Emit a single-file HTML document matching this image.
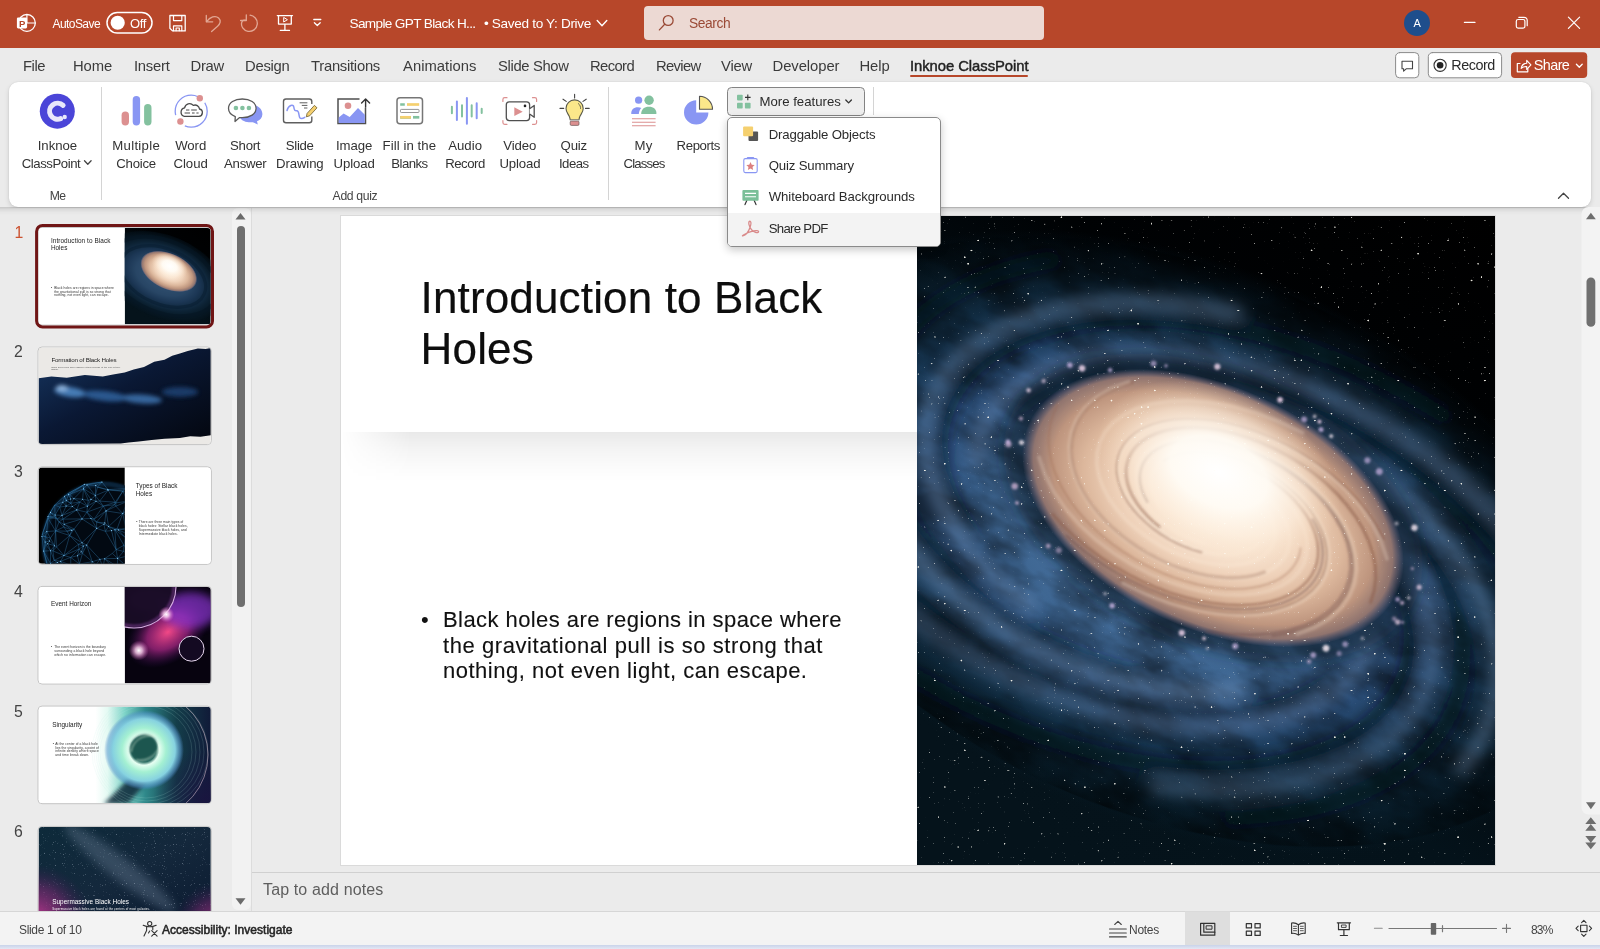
<!DOCTYPE html>
<html lang="en">
<head>
<meta charset="utf-8">
<title>Sample GPT Black Holes - PowerPoint</title>
<style>
*{box-sizing:border-box;margin:0;padding:0}
html,body{width:1600px;height:949px;overflow:hidden;background:#ebebeb;font-family:"Liberation Sans",sans-serif;color:#262626}
#app{position:relative;width:1600px;height:949px;overflow:hidden;will-change:transform}
.abs{position:absolute}
.f{position:absolute;white-space:nowrap;font-size:var(--s);line-height:calc(var(--s)*1.2);top:calc(var(--b) - var(--s)*0.9465)}
svg{position:absolute;overflow:visible}
svg svg{position:static;overflow:hidden}
/* title bar */
#titlebar{left:0;top:0;width:1600px;height:48.8px;background:#b7472a}
#titlebar .f{color:#fff}
#search{left:644px;top:5.8px;width:399.5px;height:33.8px;background:#ecd9d3;border-radius:4px}
/* tab row */
#tabs{left:0;top:48px;width:1600px;height:36px;background:#ebebeb}
#tabtext .f{--s:14.8px;--b:71.2px;color:#3b3b3b}
/* ribbon */
#ribbon{left:9px;top:82px;width:1582px;height:125px;background:#fff;border-radius:9px;box-shadow:0 2px 5px rgba(0,0,0,.13),0 0 1.5px rgba(0,0,0,.14)}
.lbl{--s:13.2px;color:#333}
.grp{--s:12.2px;color:#444}
.dd{--s:13.2px;color:#2b2b2b}
#dd{z-index:50}
#ddtext .f{z-index:51}
#ribicons{z-index:52}
.sep{position:absolute;width:1px;background:#d4d4d4}
/* left pane */
#left{left:0;top:208px;width:251px;height:703px;background:#ebebeb}
.num{--s:17px;color:#444}
.thumb{position:absolute;left:39px;width:172px;height:97px;border-radius:5px;overflow:hidden;background:#fff;box-shadow:0 0 0 1px #c9c9c9,0 1px 2px rgba(0,0,0,.25)}
/* main */
#main{left:252px;top:208px;width:1348px;height:664px;background:#ebebeb}
#slide{left:341px;top:216px;width:1154px;height:649px;background:#fff;box-shadow:0 0 0 1px #dadada}
#notes{left:252px;top:872px;width:1348px;height:39px;background:#ebebeb;border-top:1px solid #d0d0d0}
#status{left:0;top:910.5px;width:1600px;height:35px;background:#f3f3f3;border-top:1px solid #d6d6d6}
#statustext .f{--s:12px;--b:934px;color:#444}
#desk{left:0;top:945.3px;width:1600px;height:4px;background:linear-gradient(#c9d3ea,#e4e8f4)}
</style>
</head>
<body>
<div id="app">

<!-- ================= TITLE BAR ================= -->
<div id="titlebar" class="abs">
  <span class="f" style="top:16.80px;left:52.5px;--s:12px;--b:27.8px;letter-spacing:-0.568px;">AutoSave</span>
  <span class="f" style="top:15.80px;left:130px;--s:13px;--b:27.8px;letter-spacing:-0.370px;">Off</span>
  <span class="f" style="top:15.80px;left:349.5px;--s:13.6px;--b:27.8px;letter-spacing:-0.644px;">Sample GPT Black H...</span>
  <span class="f" style="top:15.80px;left:484px;--s:13.6px;--b:27.8px;letter-spacing:-0.333px;">• Saved to Y: Drive</span>
  <div id="search" class="abs"></div>
  <span class="f" style="top:15.90px;left:689px;--s:13.8px;--b:27.9px;letter-spacing:-0.403px;color:#9a4a36">Search</span>
  <div class="abs" style="left:1404px;top:10px;width:26px;height:26px;border-radius:50%;background:#1e4e8c"></div>
  <span class="f" style="top:17.00px;left:1413.5px;--s:11px;--b:27px;letter-spacing:0.156px;">A</span>
</div>

<!-- ================= TAB ROW ================= -->
<div id="tabs" class="abs"></div>
<div id="tabtext">
  <span class="f" style="top:58.20px;left:23px;letter-spacing:-0.461px;">File</span>
  <span class="f" style="top:58.20px;left:73px;letter-spacing:-0.121px;">Home</span>
  <span class="f" style="top:58.20px;left:134px;letter-spacing:-0.253px;">Insert</span>
  <span class="f" style="top:58.20px;left:190.5px;letter-spacing:-0.258px;">Draw</span>
  <span class="f" style="top:58.20px;left:245px;letter-spacing:-0.260px;">Design</span>
  <span class="f" style="top:58.20px;left:311px;letter-spacing:-0.257px;">Transitions</span>
  <span class="f" style="top:58.20px;left:403px;letter-spacing:0.030px;">Animations</span>
  <span class="f" style="top:58.20px;left:498px;letter-spacing:-0.353px;">Slide Show</span>
  <span class="f" style="top:58.20px;left:590px;letter-spacing:-0.617px;">Record</span>
  <span class="f" style="top:58.20px;left:656px;letter-spacing:-0.672px;">Review</span>
  <span class="f" style="top:58.20px;left:721px;letter-spacing:-0.203px;">View</span>
  <span class="f" style="top:58.20px;left:772.5px;letter-spacing:-0.050px;">Developer</span>
  <span class="f" style="top:58.20px;left:859.5px;letter-spacing:-0.109px;">Help</span>
  <span class="f" style="top:58.20px;left:910px;letter-spacing:-0.045px;-webkit-text-stroke:.45px #222;color:#222">Inknoe ClassPoint</span>
  <div class="abs" style="left:910px;top:75px;width:118px;height:2px;background:#b7472a;border-radius:1px"></div>
</div>

<!--CHROME-START--><svg id="tbicons" style="left:0;top:0;z-index:5" width="1600" height="84" viewBox="0 0 1600 84" fill="none" stroke-linecap="round" stroke-linejoin="round">
  <!-- PowerPoint logo -->
  <circle cx="26.9" cy="22.9" r="8.4" stroke="#fff" stroke-width="1.3"/>
  <path d="M26.9 14.6V23H35.2" stroke="#fff" stroke-width="1.2"/>
  <rect x="16.9" y="17.5" width="10.2" height="10.9" rx="1.3" fill="#fff"/>
  <!-- autosave toggle -->
  <rect x="107" y="12.5" width="45" height="20.5" rx="10.25" stroke="#fff" stroke-width="1.5"/>
  <circle cx="117.700" cy="22.750" r="7.1" fill="#fff"/>
  <!-- save -->
  <path d="M169.900 15.500h15.300v15.400h-12.700l-2.600-2.600z" stroke="#fff" stroke-width="1.300"/>
  <path d="M173.500 15.700v4.900h8.300v-4.900M173.500 30.700v-4.900h8.300v4.900M176.100 30.700v-2.700h3.200v2.700" stroke="#fff" stroke-width="1.200"/>
  <!-- undo / redo (disabled) -->
  <g stroke="#e2a794" stroke-width="1.300">
    <path d="M206.300 15.400v6.400h6.400"/><path d="M206.600 21.600c3.400-4.600 8.800-6.600 12-3.600 2.700 2.600 1.800 5.800-1 8.200l-6 5.400"/>
    <path d="M246.300 14.800v5.700h-5.700"/><path d="M246 20.300c-4.600-1.500-5.500 4.300-3.300 7.600 2.600 3.800 7.700 4.600 11.300 2 3.900-2.900 4.400-8.500 1.300-11.900-1.500-1.600-3.300-2.500-5.200-2.800"/>
  </g>
  <!-- present -->
  <path d="M277.300 15.600h15.200M278.500 15.800v8.300h12.800v-8.300M284.900 24.300v6M280.300 30.400h9.200" stroke="#fff" stroke-width="1.300"/>
  <path d="M283.700 17.800v4.200l3.400-2.100z" stroke="#fff" stroke-width="1"/>
  <!-- qat caret -->
  <path d="M313.800 19.500h7M314.400 22.700l2.900 2.800 2.900-2.800" stroke="#fff" stroke-width="1.300"/>
  <!-- saved chevron -->
  <path d="M597.200 20.600l4.800 5.100 4.800-5.100" stroke="#fff" stroke-width="1.400"/>
  <!-- search icon -->
  <circle cx="668.200" cy="20.500" r="4.900" stroke="#9a4a36" stroke-width="1.300"/><path d="M664.700 24.200l-5.300 5.700" stroke="#9a4a36" stroke-width="1.300"/>
  <!-- window controls -->
  <path d="M1464.400 22.400h10.600" stroke="#fff" stroke-width="1.200"/>
  <rect x="1516.300" y="19.500" width="8.600" height="8.600" rx="1.800" stroke="#fff" stroke-width="1.200"/>
  <path d="M1518.800 17.300h5.400a3 3 0 0 1 3 3v5.400" stroke="#fff" stroke-width="1.200"/>
  <path d="M1568.400 17.100l11.200 11.200M1579.600 17.100l-11.200 11.200" stroke="#fff" stroke-width="1.200"/>
  <!-- tab row right buttons -->
  <rect x="1395.600" y="52.600" width="23.200" height="25.200" rx="4" fill="#fff" stroke="#8a8a8a" stroke-width="1"/>
  <path d="M1402 61.200h10.500v7.600h-6.300l-2.600 2.400v-2.400h-1.600z" stroke="#444" stroke-width="1.100"/>
  <rect x="1428.300" y="52.600" width="73.300" height="25.200" rx="4" fill="#fff" stroke="#8a8a8a" stroke-width="1"/>
  <circle cx="1440.100" cy="65.300" r="6.100" stroke="#333" stroke-width="1.100"/><circle cx="1440.100" cy="65.300" r="3.300" fill="#222"/>
  <rect x="1511" y="52.300" width="76.200" height="25.800" rx="4" fill="#b7472a"/>
  <path d="M1520 63.500h-2.700v8.300h10.500v-3.200" stroke="#fff" stroke-width="1.200"/>
  <path d="M1521.200 68.400c.5-3.300 2.500-5 5.500-5.100v-2.900l4.200 4.500-4.200 4.500v-2.900c-2.300-.1-4 .5-5.500 1.900z" stroke="#fff" stroke-width="1.100"/>
  <path d="M1576.400 64.300l2.900 2.900 2.900-2.900" stroke="#fff" stroke-width="1.300"/>
</svg>
<span class="f" style="top:17.60px;left:19.100px;--s:9.500px;--b:26.600px;color:#b7472a;font-weight:bold;z-index:6">P</span>
<span class="f" style="top:57.30px;left:1451.300px;--s:14.4px;--b:70.3px;letter-spacing:-0.482px;color:#2b2b2b;z-index:6">Record</span>
<span class="f" style="top:57.30px;left:1533.800px;--s:14.4px;--b:70.3px;letter-spacing:-0.581px;color:#fff;z-index:6">Share</span>
<!--CHROME-END-->
<!-- ================= RIBBON ================= -->
<!--RIB-START--><div id="ribbon" class="abs"></div>
<div id="ribtext">
  <span class="f lbl" style="top:138.40px;left:37.7px;--b:150.4px;letter-spacing:-0.018px;">Inknoe</span>
  <span class="f lbl" style="top:155.50px;left:21.8px;--b:167.5px;letter-spacing:-0.455px;">ClassPoint</span>
  <span class="f lbl grp" style="top:188.60px;left:49.7px;--b:199.6px;letter-spacing:-0.569px;">Me</span>
  <span class="f lbl" style="top:138.40px;left:112.2px;--b:150.4px;letter-spacing:0.318px;">Multiple</span>
  <span class="f lbl" style="top:155.50px;left:116.3px;--b:167.5px;letter-spacing:-0.260px;">Choice</span>
  <span class="f lbl" style="top:138.40px;left:175.2px;--b:150.4px;letter-spacing:-0.070px;">Word</span>
  <span class="f lbl" style="top:155.50px;left:173.4px;--b:167.5px;letter-spacing:0.006px;">Cloud</span>
  <span class="f lbl" style="top:138.40px;left:230px;--b:150.4px;letter-spacing:-0.246px;">Short</span>
  <span class="f lbl" style="top:155.50px;left:224px;--b:167.5px;letter-spacing:-0.247px;">Answer</span>
  <span class="f lbl" style="top:138.40px;left:285.8px;--b:150.4px;letter-spacing:-0.306px;">Slide</span>
  <span class="f lbl" style="top:155.50px;left:276px;--b:167.5px;letter-spacing:-0.111px;">Drawing</span>
  <span class="f lbl" style="top:138.40px;left:336px;--b:150.4px;letter-spacing:-0.091px;">Image</span>
  <span class="f lbl" style="top:155.50px;left:333.6px;--b:167.5px;letter-spacing:-0.133px;">Upload</span>
  <span class="f lbl" style="top:138.40px;left:382.6px;--b:150.4px;letter-spacing:0.074px;">Fill in the</span>
  <span class="f lbl" style="top:155.50px;left:391.3px;--b:167.5px;letter-spacing:-0.532px;">Blanks</span>
  <span class="f lbl" style="top:138.40px;left:448.2px;--b:150.4px;letter-spacing:0.013px;">Audio</span>
  <span class="f lbl" style="top:155.50px;left:445.2px;--b:167.5px;letter-spacing:-0.469px;">Record</span>
  <span class="f lbl" style="top:138.40px;left:503.3px;--b:150.4px;letter-spacing:-0.100px;">Video</span>
  <span class="f lbl" style="top:155.50px;left:499.4px;--b:167.5px;letter-spacing:-0.133px;">Upload</span>
  <span class="f lbl" style="top:138.40px;left:560.6px;--b:150.4px;letter-spacing:-0.206px;">Quiz</span>
  <span class="f lbl" style="top:155.50px;left:559px;--b:167.5px;letter-spacing:-0.553px;">Ideas</span>
  <span class="f lbl" style="top:138.40px;left:634.5px;--b:150.4px;letter-spacing:0.353px;">My</span>
  <span class="f lbl" style="top:155.50px;left:623.6px;--b:167.5px;letter-spacing:-0.872px;">Classes</span>
  <span class="f lbl" style="top:138.40px;left:676.6px;--b:150.4px;letter-spacing:-0.398px;">Reports</span>
  <span class="f lbl grp" style="top:188.60px;left:332.6px;--b:199.6px;letter-spacing:-0.330px;">Add quiz</span>
  <div class="sep" style="left:101px;top:87px;height:113px"></div>
  <div class="sep" style="left:608px;top:87px;height:113px"></div>
  <div class="sep" style="left:872.5px;top:87px;height:28px"></div>
  <!-- More features button -->
  <div class="abs" style="left:727px;top:86.5px;width:137.5px;height:29px;background:#eeeeee;border:1.4px solid #838383;border-radius:4.5px"></div>
  <span class="f lbl" style="top:94.30px;left:759.4px;--b:106.3px;letter-spacing:0.017px;color:#2b2b2b">More features</span>
</div>
<!-- dropdown -->
<div id="dd" class="abs" style="left:727px;top:116.5px;width:214.3px;height:130.3px;background:#fff;border:1px solid #8a8a8a;border-radius:5px;box-shadow:0 3px 8px rgba(0,0,0,.22);overflow:hidden">
  <div class="abs" style="left:0;top:95.7px;width:214px;height:33px;background:#f3f3f3"></div>
</div>
<div id="ddtext">
  <span class="f dd" style="top:126.70px;left:768.7px;--b:138.7px;letter-spacing:-0.149px;">Draggable Objects</span>
  <span class="f dd" style="top:158.10px;left:768.7px;--b:170.1px;letter-spacing:-0.167px;">Quiz Summary</span>
  <span class="f dd" style="top:189.30px;left:768.7px;--b:201.3px;letter-spacing:-0.090px;">Whiteboard Backgrounds</span>
  <span class="f dd" style="top:220.90px;left:768.7px;--b:232.9px;letter-spacing:-0.704px;">Share PDF</span>
</div>
<svg id="ribicons" style="left:0;top:0" width="1600" height="260" viewBox="0 0 1600 260" fill="none">
  <!-- ClassPoint logo -->
  <circle cx="57.3" cy="111.2" r="17.5" fill="#4b45d8"/>
  <path d="M63.1 105.4 A8 8 0 1 0 60.6 118.6" stroke="#e9e7fb" stroke-width="5" stroke-linecap="round"/>
  <circle cx="64.7" cy="117" r="2.2" fill="#e9e7fb"/>
  <path d="M84.5 160.8l3.3 3.4 3.3-3.4" stroke="#444" stroke-width="1.3" stroke-linecap="round" stroke-linejoin="round"/>
  <!-- Multiple choice -->
  <g stroke-linecap="round" stroke-width="7.4">
    <path d="M125.3 115.2V121.8" stroke="#dc9090"/>
    <path d="M136.4 99.8V121.8" stroke="#8996f3"/>
    <path d="M147.8 107.7V121.8" stroke="#83c19f"/>
  </g>
  <!-- Word cloud -->
  <circle cx="191.2" cy="111.2" r="16" stroke="#8996f3" stroke-width="1.3" stroke-dasharray="36 9 41 14.5" stroke-dashoffset="-46"/>
  <circle cx="199.8" cy="98.3" r="3.2" fill="#dc9090"/>
  <circle cx="180.4" cy="121.5" r="3.2" fill="#dc9090"/>
  <path d="M184.3 116.3h14.6a3.7 3.7 0 0 0 .6-7.3 4.4 4.4 0 0 0-6.2-3.6 5 5 0 0 0-8.7 2.5 4.3 4.3 0 0 0-.3 8.4z" fill="#fff" stroke="#4a4a4a" stroke-width="1.3" stroke-linejoin="round"/>
  <path d="M186 110h3.4M191.2 110h5.6M184.6 113h5.4M192 113h2.6M196.4 113h2.2" stroke="#4a4a4a" stroke-width="1"/>
  <!-- Short answer -->
  <path d="M246 104.8c9.5-1.6 16.6 3 16.4 9.4-.1 3.600-2.500 5.800-5.400 7l.8 3.200-5-2.200c-6 .5-11-1-13-5z" fill="#8996f3"/>
  <path d="M242.300 99c7.800 0 13.800 3.700 13.800 9.300s-6 9.400-13.800 9.400c-.9 0-1.800-.05-2.700-.15l-4.600 3.900.300-4.900c-4.200-1.500-6.800-4.400-6.800-8.250 0-5.600 6-9.300 13.800-9.300z" fill="#fff" stroke="#5a5a5a" stroke-width="1.3" stroke-linejoin="round"/>
  <circle cx="235.900" cy="108" r="2.300" fill="#83c19f"/><circle cx="242.400" cy="108" r="2.300" fill="#83c19f"/><circle cx="248.900" cy="108" r="2.300" fill="#83c19f"/>
  <!-- Slide drawing -->
  <path d="M311.800 116.500V120.300a2.500 2.500 0 0 1-2.500 2.500H286a2.500 2.500 0 0 1-2.500-2.500V101.500a2.500 2.500 0 0 1 2.500-2.500h23.300a2.500 2.500 0 0 1 2.500 2.500V104" stroke="#5f5f5f" stroke-width="1.400"/>
  <path d="M287 110.500c1.500-5.500 6.500-6.500 6.800-3.500.4 3.500 1.300 4 3 3.800 2.500-.300 1.800 5.400 3 6.900 1 1.300 3 .9 5-.3" stroke="#8996f3" stroke-width="1.500" stroke-linecap="round"/>
  <path d="M299.600 102.800h7.800M301.800 105.400h5.600M304 108h3.400" stroke="#5f5f5f" stroke-width="1"/>
  <path d="M314.400 105.400l2.600 2.400-7.300 8-3.400 1 .8-3.400z" fill="#f5d06f" stroke="#6b5a2a" stroke-width=".8" stroke-linejoin="round"/>
  <!-- Image upload -->
  <path d="M359.500 98.900H338v24.700h27.500V107.500" stroke="#4f4f4f" stroke-width="1.500" fill="#fff"/>
  <path d="M338.700 122.900V117.600L343.600 113.400L349.700 117.100L358 107.900L364.800 114.800V122.900Z" fill="#8996f3"/>
  <circle cx="348" cy="105.700" r="3.300" fill="#dc9090"/>
  <path d="M365.600 107V99.300M361.600 103l4-4 4 4" stroke="#333" stroke-width="1.400" stroke-linecap="round" stroke-linejoin="round"/>
  <!-- Fill in the blanks -->
  <rect x="397" y="97.800" width="25.500" height="26" rx="3" fill="#fff" stroke="#767676" stroke-width="1.500"/>
  <path d="M400.200 104.500h4.600M400.200 117.300h10.800" stroke="#83c19f" stroke-width="2.700"/>
  <path d="M407 104.500h12.200" stroke="#f5d06f" stroke-width="2.700"/>
  <path d="M400.200 117.300h10.700" stroke="#f5d06f" stroke-width="2.700"/><path d="M413 117.300h6.300" stroke="#83c19f" stroke-width="2.700"/>
  <rect x="400.500" y="109.400" width="18.500" height="3.100" rx=".8" fill="#fff" stroke="#8a8a8a" stroke-width=".9"/>
  <!-- Audio record -->
  <g stroke-width="2" stroke-linecap="round">
    <path d="M451.900 106.800v6.400M462 105.200v11.400M471.700 105.200v11.400M481.700 108.700v4.400" stroke="#83c19f"/>
    <path d="M456.900 101.600v18.400M466.900 97.900v25.900M476.700 103.200v15.100" stroke="#8996f3"/>
  </g>
  <!-- Video upload -->
  <path d="M502.900 101.500v-2a1.800 1.800 0 0 1 1.800-1.800h2.300M532.500 97.700h2.300a1.800 1.800 0 0 1 1.800 1.800v2M536.600 120.500v2a1.800 1.800 0 0 1-1.800 1.800h-2.300M507 124.300h-2.300a1.800 1.800 0 0 1-1.800-1.800v-2" stroke="#dc9090" stroke-width="1.200" stroke-linecap="round"/>
  <rect x="506.300" y="101.800" width="23.300" height="18.800" rx="3" fill="#fff" stroke="#4f4f4f" stroke-width="1.300"/>
  <path d="M529.600 108.800l4.600-3.300v11.800l-4.600-3.300" stroke="#4f4f4f" stroke-width="1.300" stroke-linejoin="round" fill="#fff"/>
  <path d="M514.300 107.300v8.800l8.400-4.400z" fill="#dc9090"/>
  <circle cx="525" cy="105.900" r="1.300" fill="#222"/>
  <!-- Quiz ideas -->
  <path d="M574.600 94.300v3.600M563 99.200l3.200 2.200M586.200 99.200l-3.200 2.200M560 108.400h3.700M585.500 108.400h3.700" stroke="#444" stroke-width="1.100" stroke-linecap="round"/>
  <path d="M574.600 99.900a8.600 8.600 0 0 1 8.600 8.600c0 3.200-1.800 5-3 7.300-.700 1.300-1 2.500-1.200 3.900h-8.800c-.2-1.400-.5-2.600-1.200-3.900-1.200-2.300-3-4.100-3-7.300a8.600 8.600 0 0 1 8.600-8.600z" fill="#fbe88a" stroke="#5a5a4a" stroke-width="1.100"/>
  <path d="M578.400 103.600c1.700 1.300 2.300 3.200 2.200 4.900" stroke="#5a5a4a" stroke-width=".9" stroke-linecap="round"/>
  <rect x="570.200" y="121" width="8.800" height="4.400" rx="1.200" fill="#dc9090" stroke="#6a5a5a" stroke-width=".7"/>
  <path d="M570.300 120.300h8.600" stroke="#bbb" stroke-width="1.200"/>
  <!-- My classes -->
  <circle cx="638.600" cy="100.200" r="3.600" fill="#8996f3"/>
  <path d="M631.300 114.100c-.4-4.200 2.400-6.900 6.600-6.900 1.300 0 2.500.3 3.500.8-1.400 1.300-2.400 3.300-2.600 6.100z" fill="#8996f3"/>
  <circle cx="649.100" cy="100.300" r="4.700" fill="#83c19f"/>
  <path d="M641.200 114.100c-.2-4.900 3.200-7.400 7.700-7.400s8 2.500 7.500 7.400z" fill="#83c19f"/>
  <path d="M632 118.700h23.600M632 122.200h23.600M632 125.700h23.600" stroke="#dc9090" stroke-width="1.100"/>
  <!-- Reports -->
  <path d="M696.200 100.200a12.200 12.200 0 1 0 12.200 12.200h-12.200z" fill="#8996f3"/>
  <path d="M699.500 96.300a13 13 0 0 1 13 13h-13z" fill="#fbe88a" stroke="#555" stroke-width="1.100" stroke-linejoin="round"/>
  <!-- More features icon -->
  <rect x="737" y="94.700" width="5.700" height="5.700" rx=".8" fill="#83c19f"/>
  <rect x="737" y="102.800" width="5.700" height="5.700" rx=".8" fill="#83c19f"/>
  <rect x="744.900" y="102.800" width="5.700" height="5.700" rx=".8" fill="#83c19f"/>
  <path d="M747.800 94.600v5.600M745 97.400h5.600" stroke="#333" stroke-width="1.100"/>
  <path d="M845.800 100l2.800 2.900 2.800-2.900" stroke="#333" stroke-width="1.300" stroke-linecap="round" stroke-linejoin="round"/>
  <!-- dropdown icons -->
  <rect x="748.500" y="131.600" width="9.600" height="9.300" rx="1" fill="#555"/>
  <rect x="743.100" y="126.600" width="10" height="9.600" rx="1" fill="#f5d06f"/>
  <rect x="743.800" y="158.600" width="13.400" height="14" rx="1.500" fill="#fff" stroke="#8996f3" stroke-width="1.100"/>
  <path d="M747.800 158h5.400" stroke="#8996f3" stroke-width="2.200" stroke-linecap="round"/>
  <path d="M750.500 162l1.260 2.700 2.940.34-2.180 2 .6 2.900-2.620-1.460-2.620 1.460.6-2.900-2.180-2 2.940-.34z" fill="#dc8080"/>
  <path d="M746.800 200.600l-1.800 4M754.200 200.600l1.800 4" stroke="#333" stroke-width="1.200" stroke-linecap="round"/>
  <rect x="742.400" y="190" width="16.200" height="10.700" rx="1" fill="#7bbf98"/>
  <path d="M745 193.400h11M745 196.800h11" stroke="#fff" stroke-width="1.100"/>
  <path d="M742.800 235.800c2.800-.6 5.800-4.400 7.200-8.300 1-2.800 1.200-5.500.2-6.100-1-.6-1.800.8-1.200 3.200.9 3.500 3.700 6.700 6.500 7.700 1.800.6 3.200.3 3.100-.7-.1-1.100-2.400-1.300-5-.8-3.600.7-7.600 2.500-9.700 3.900-1.400.9-1.800 1.300-1.100 1.100z" stroke="#d98a8a" stroke-width="1.300" stroke-linejoin="round" stroke-linecap="round"/>
  <!-- collapse chevron -->
  <path d="M1558.500 198.300l5-5 5 5" stroke="#444" stroke-width="1.300" stroke-linecap="round" stroke-linejoin="round"/>
</svg>
<!--RIB-END-->

<!-- ================= LEFT PANE ================= -->
<!--LEFT-START--><div id="left" class="abs"></div>
<div class="abs" style="left:231.5px;top:208px;width:19.5px;height:702px;background:#f2f2f2;border-radius:6px"></div>
<div class="abs" style="left:251px;top:208px;width:1px;height:703px;background:#dcdcdc"></div>
<div class="abs" style="left:236.5px;top:225.5px;width:8px;height:381px;background:#6f6f6f;border-radius:4px"></div>
<span class="f" style="top:223.80px;left:14.6px;--s:15.8px;--b:237.8px;color:#cc5230">1</span>
<span class="f" style="top:343.30px;left:14px;--s:15.8px;--b:357.3px;color:#444">2</span>
<span class="f" style="top:463.10px;left:14px;--s:15.8px;--b:477.1px;color:#444">3</span>
<span class="f" style="top:583.00px;left:14px;--s:15.8px;--b:597.0px;color:#444">4</span>
<span class="f" style="top:702.70px;left:14px;--s:15.8px;--b:716.7px;color:#444">5</span>
<span class="f" style="top:822.60px;left:14px;--s:15.8px;--b:836.6px;color:#444">6</span>
<svg id="thumbs" style="left:0;top:0" width="252" height="949" viewBox="0 0 252 949">
<defs><clipPath id="tc0"><rect x="38.6" y="228.0" width="172.2" height="96.4" rx="3.5"/></clipPath><clipPath id="tc1"><rect x="38.6" y="347.6" width="172.2" height="96.4" rx="3.5"/></clipPath><clipPath id="tc2"><rect x="38.6" y="467.4" width="172.2" height="96.4" rx="3.5"/></clipPath><clipPath id="tc3"><rect x="38.6" y="587.0" width="172.2" height="96.4" rx="3.5"/></clipPath><clipPath id="tc4"><rect x="38.6" y="706.7" width="172.2" height="96.4" rx="3.5"/></clipPath><clipPath id="tc5"><rect x="38.6" y="827.0" width="172.2" height="96.4" rx="3.5"/></clipPath>
<filter id="tb2" x="-30%" y="-30%" width="160%" height="160%"><feGaussianBlur stdDeviation="2.2"/></filter>
<filter id="tb1" x="-30%" y="-30%" width="160%" height="160%"><feGaussianBlur stdDeviation="1"/></filter>
<filter id="tb4" x="-40%" y="-40%" width="180%" height="180%"><feGaussianBlur stdDeviation="4.5"/></filter>
<filter id="tstars" x="0" y="0" width="100%" height="100%"><feTurbulence type="fractalNoise" baseFrequency=".9" numOctaves="1" seed="5"/><feColorMatrix values="0 0 0 0 .8  0 0 0 0 .88  0 0 0 0 1  0 8 0 0 -5.3"/></filter>
<linearGradient id="t2g" x1="0" y1="0" x2="1" y2="1"><stop offset="0" stop-color="#173762"/><stop offset=".45" stop-color="#0a1834"/><stop offset="1" stop-color="#03060e"/></linearGradient>
<radialGradient id="t4a"><stop offset="0" stop-color="#ff4d8d" stop-opacity=".95"/><stop offset=".5" stop-color="#b52a8e" stop-opacity=".7"/><stop offset="1" stop-color="#3a1060" stop-opacity="0"/></radialGradient>
<radialGradient id="t4b"><stop offset="0" stop-color="#fff"/><stop offset=".35" stop-color="#ffd0f0" stop-opacity=".8"/><stop offset="1" stop-color="#e060c0" stop-opacity="0"/></radialGradient>
<linearGradient id="t5g" x1="0" y1="0" x2="1" y2="0"><stop offset=".33" stop-color="#fff"/><stop offset=".4" stop-color="#e4faf3"/><stop offset=".5" stop-color="#7ed4c8"/><stop offset=".62" stop-color="#2f888a"/><stop offset=".8" stop-color="#143e4a"/><stop offset="1" stop-color="#101a38"/></linearGradient>
<radialGradient id="t5n"><stop offset="0" stop-color="#1a1440" stop-opacity=".9"/><stop offset="1" stop-color="#1a1440" stop-opacity="0"/></radialGradient>
<radialGradient id="t5r"><stop offset="0" stop-color="#1f5a55"/><stop offset=".3" stop-color="#2a6c62"/><stop offset=".38" stop-color="#e6fff2"/><stop offset=".55" stop-color="#a4f0d2"/><stop offset=".78" stop-color="#86d2e0"/><stop offset=".92" stop-color="#5a9ad0" stop-opacity=".55"/><stop offset="1" stop-color="#4a86c8" stop-opacity="0"/></radialGradient>
<linearGradient id="t6g" x1="0" y1="0" x2="1" y2="1"><stop offset="0" stop-color="#0d2a3a"/><stop offset=".5" stop-color="#14283c"/><stop offset="1" stop-color="#0b1a30"/></linearGradient>
<radialGradient id="t6m"><stop offset="0" stop-color="#d63a9a" stop-opacity=".95"/><stop offset=".6" stop-color="#8a2a7a" stop-opacity=".5"/><stop offset="1" stop-color="#3a1a50" stop-opacity="0"/></radialGradient>
</defs>
<rect x="38.0" y="227.4" width="173.4" height="97.60000000000001" rx="4" fill="#fff" stroke="#c4c4c4" stroke-width="1"/>
<rect x="38.0" y="347.0" width="173.4" height="97.60000000000001" rx="4" fill="#fff" stroke="#c4c4c4" stroke-width="1"/>
<rect x="38.0" y="466.79999999999995" width="173.4" height="97.60000000000001" rx="4" fill="#fff" stroke="#c4c4c4" stroke-width="1"/>
<rect x="38.0" y="586.4" width="173.4" height="97.60000000000001" rx="4" fill="#fff" stroke="#c4c4c4" stroke-width="1"/>
<rect x="38.0" y="706.1" width="173.4" height="97.60000000000001" rx="4" fill="#fff" stroke="#c4c4c4" stroke-width="1"/>
<rect x="38.0" y="826.4" width="173.4" height="97.60000000000001" rx="4" fill="#fff" stroke="#c4c4c4" stroke-width="1"/>
<rect x="36.6" y="225.4" width="175.900" height="101.500" rx="6" fill="none" stroke="#701616" stroke-width="3"/>
<g clip-path="url(#tc0)"><rect x="38.6" y="228.0" width="172.2" height="96.4" fill="#fff"/>
<svg x="124.7" y="228.0" width="86.1" height="96.4" viewBox="0 0 578 649" preserveAspectRatio="none"><rect width="578" height="649" fill="url(#gbg)"/><g transform="translate(258 326) rotate(23)"><ellipse rx="455" ry="280" fill="url(#gblue)"/><ellipse rx="300" ry="186" fill="none" stroke="#0b2740" stroke-width="22" opacity=".6"/><ellipse rx="385" ry="240" fill="none" stroke="#061826" stroke-width="26" opacity=".6"/><ellipse rx="440" ry="275" fill="#04121c" opacity=".38"/></g><g transform="translate(296 292) rotate(25)"><ellipse rx="203" ry="121" fill="url(#gwarm)"/></g><g transform="translate(302 256) rotate(25)"><ellipse rx="128" ry="82" fill="url(#gcore)"/></g></svg></g>
<g clip-path="url(#tc1)"><rect x="38.6" y="347.6" width="172.2" height="96.4" fill="#ebe9e6"/>
<polygon points="38.6,378.2 51.4,376.4 66.8,377.7 84.8,375.1 102.8,376.4 113.1,374.6 124.7,372.5 133.7,369.4 144.0,366.9 154.2,361.7 164.5,359.7 172.2,355.8 179.9,353.5 187.7,350.9 197.9,348.4 205.7,348.9 210.8,348.1 210.8,435.2 200.5,436.8 190.2,436.3 179.9,438.1 164.5,438.8 151.7,440.1 138.8,441.4 128.5,442.4 120.8,443.5 38.6,444.0" fill="url(#t2g)"/>
<g filter="url(#tb2)" opacity=".9"><ellipse cx="70" cy="392" rx="16" ry="5" fill="#4d86c2" transform="rotate(8 70 392)"/><ellipse cx="105" cy="396" rx="22" ry="5" fill="#2f5f98" transform="rotate(6 105 396)"/><ellipse cx="142" cy="399" rx="20" ry="4.500" fill="#3a6ea8" transform="rotate(4 142 399)"/><ellipse cx="62" cy="388" rx="6" ry="3" fill="#9cc4ee"/><ellipse cx="180" cy="392" rx="18" ry="5" fill="#1f4070"/></g>
</g>
<g clip-path="url(#tc2)"><rect x="38.6" y="467.4" width="172.2" height="96.4" fill="#fff"/><rect x="38.6" y="467.4" width="86.1" height="96.4" fill="#000"/>
<svg x="38.6" y="467.4" width="86.1" height="96.4" viewBox="38.6 467.4 86.1 96.4">
<circle cx="103.0" cy="543.0" r="61.5" fill="#020912"/>
<circle cx="103.0" cy="543.0" r="59.0" fill="none" stroke="#1d5a8a" stroke-width="5" opacity=".35" filter="url(#tb1)"/>
<path d="M114.9 529.7L117.0 529.0M114.9 529.7L123.9 545.3M114.9 529.7L111.5 530.6M114.9 529.7L116.1 549.6M114.9 529.7L125.6 537.7M114.9 529.7L108.6 526.5M114.9 529.7L118.4 529.9M57.3 518.9L55.1 515.0M57.3 518.9L62.0 515.4M57.3 518.9L55.8 518.1M57.3 518.9L59.0 521.9M57.3 518.9L63.0 519.1M99.9 559.3L104.6 558.7M99.9 559.3L103.0 567.5M99.9 559.3L86.7 545.1M99.9 559.3L92.3 561.7M99.9 559.3L96.2 564.7M134.2 573.3L154.4 566.5M134.2 573.3L128.1 567.5M134.2 573.3L131.8 583.5M134.2 573.3L133.6 560.2M134.2 573.3L143.0 581.0M134.2 573.3L145.6 577.5M134.2 573.3L121.2 579.2M108.1 587.2L110.0 595.0M108.1 587.2L118.0 588.3M108.1 587.2L95.5 594.4M108.1 587.2L92.2 590.7M108.1 587.2L101.7 599.2M108.1 587.2L93.9 580.5M108.1 587.2L108.2 584.9M145.5 585.5L145.0 582.1M145.5 585.5L139.3 591.5M145.5 585.5L146.9 585.1M145.5 585.5L143.0 581.0M104.6 558.7L112.4 553.4M104.6 558.7L103.0 567.5M104.6 558.7L117.5 566.5M104.6 558.7L115.2 569.9M104.6 558.7L117.6 558.4M57.2 584.1L48.7 571.7M57.2 584.1L63.4 589.7M57.2 584.1L53.6 578.8M57.2 584.1L63.6 583.2M57.2 584.1L56.8 578.1M160.4 558.9L161.9 557.2M160.4 558.9L154.4 566.5M160.4 558.9L158.8 564.2M160.4 558.9L157.4 553.7M132.4 495.9L131.7 499.0M132.4 495.9L134.5 498.7M132.4 495.9L130.4 494.2M132.4 495.9L132.6 493.2M132.4 495.9L135.8 493.7M70.8 565.2L79.4 564.0M70.8 565.2L65.0 567.3M70.8 565.2L60.6 561.3M70.8 565.2L70.7 557.4M70.8 565.2L73.5 570.5M48.0 518.2L55.8 518.1M48.0 518.2L46.8 531.5M48.0 518.2L49.8 516.9M48.0 518.2L48.0 516.5M48.0 518.2L55.6 530.9M48.0 518.2L42.1 534.9M82.0 518.9L76.7 509.9M82.0 518.9L90.9 518.5M82.0 518.9L74.1 529.0M82.0 518.9L64.2 524.2M82.0 518.9L86.9 512.2M82.0 518.9L96.7 528.4M82.0 518.9L63.0 519.1M112.4 553.4L116.1 549.6M112.4 553.4L117.6 558.4M155.7 573.1L157.7 569.6M155.7 573.1L154.0 570.1M155.7 573.1L154.3 575.3M155.7 573.1L156.3 573.5M130.5 584.3L131.8 583.5M130.5 584.3L139.3 591.5M130.5 584.3L122.9 591.1M130.5 584.3L131.2 593.7M130.5 584.3L121.2 579.2M164.3 537.7L163.6 551.2M164.3 537.7L164.1 536.3M164.3 537.7L154.4 550.0M164.3 537.7L149.4 531.6M148.0 577.7L145.0 582.1M148.0 577.7L154.0 570.1M148.0 577.7L149.7 580.6M148.0 577.7L154.3 575.3M148.0 577.7L145.6 577.5M48.7 571.7L48.7 569.3M48.7 571.7L53.6 578.8M48.7 571.7L61.3 567.5M48.7 571.7L56.8 578.1M48.7 571.7L43.7 551.1M117.0 529.0L108.6 526.5M117.0 529.0L122.7 513.5M117.0 529.0L126.0 528.9M117.0 529.0L118.4 529.9M55.1 515.0L62.0 515.4M55.1 515.0L59.7 507.1M55.1 515.0L50.5 512.4M55.1 515.0L55.8 518.1M55.1 515.0L54.7 505.0M55.1 515.0L54.6 516.4M123.9 545.3L123.5 551.4M123.9 545.3L116.1 549.6M123.9 545.3L125.6 537.7M123.9 545.3L135.5 545.4M123.9 545.3L130.1 555.3M132.5 518.1L149.7 527.2M132.5 518.1L132.4 531.1M132.5 518.1L131.5 507.4M132.5 518.1L141.9 531.7M132.5 518.1L122.7 513.5M132.5 518.1L126.0 528.9M132.5 518.1L149.0 514.7M79.4 564.0L82.5 553.3M79.4 564.0L77.5 555.7M79.4 564.0L89.7 568.3M79.4 564.0L70.7 557.4M79.4 564.0L74.4 571.4M79.4 564.0L73.5 570.5M79.4 564.0L92.3 561.7M132.9 595.7L124.1 596.4M132.9 595.7L139.3 591.5M132.9 595.7L131.2 593.7M71.1 595.4L75.5 598.0M71.1 595.4L70.0 594.6M71.1 595.4L74.3 592.3M62.0 515.4L76.7 509.9M62.0 515.4L59.7 507.1M62.0 515.4L72.3 506.5M62.0 515.4L66.1 506.1M62.0 515.4L63.0 519.1M161.9 557.2L163.6 551.2M161.9 557.2L158.8 564.2M161.9 557.2L157.7 569.6M161.9 557.2L158.7 566.5M161.9 557.2L157.4 553.7M76.7 509.9L79.7 502.1M76.7 509.9L87.4 506.2M76.7 509.9L72.3 506.5M76.7 509.9L86.9 512.2M76.7 509.9L63.0 519.1M59.7 507.1L54.7 505.0M59.7 507.1L66.1 506.1M59.7 507.1L62.8 502.2M110.0 595.0L121.3 592.4M110.0 595.0L118.0 588.3M110.0 595.0L101.7 599.2M110.0 595.0L109.3 599.3M110.0 595.0L120.7 591.5M82.5 553.3L77.5 555.7M82.5 553.3L86.7 545.1M82.5 553.3L83.3 546.1M82.5 553.3L92.3 561.7M82.5 553.3L81.2 551.7M121.3 592.4L124.1 596.4M121.3 592.4L122.9 591.1M121.3 592.4L109.3 599.3M121.3 592.4L120.7 591.5M163.6 551.2L154.4 550.0M163.6 551.2L157.4 553.7M50.5 512.4L54.7 505.0M50.5 512.4L49.8 516.9M50.5 512.4L54.6 516.4M50.5 512.4L48.0 516.5M54.2 560.4L50.5 563.6M54.2 560.4L52.9 550.9M54.2 560.4L57.4 562.5M54.2 560.4L50.6 550.7M54.2 560.4L60.6 561.3M54.2 560.4L63.9 555.5M131.7 499.0L135.7 503.4M131.7 499.0L127.3 501.3M131.7 499.0L134.5 498.7M131.7 499.0L130.4 494.2M131.7 499.0L130.9 506.2M118.0 588.3L122.9 591.1M118.0 588.3L108.2 584.9M118.0 588.3L120.7 591.5M118.0 588.3L121.2 579.2M50.5 563.6L48.7 569.3M50.5 563.6L57.4 562.5M50.5 563.6L50.6 550.7M50.5 563.6L43.7 551.1M79.7 502.1L87.4 506.2M79.7 502.1L72.3 506.5M79.7 502.1L73.9 498.6M79.7 502.1L82.6 499.2M79.7 502.1L70.9 503.3M154.4 566.5L158.8 564.2M154.4 566.5L153.0 551.6M154.4 566.5L157.7 569.6M154.4 566.5L158.7 566.5M154.4 566.5L154.0 570.1M154.4 566.5L133.6 560.2M154.4 566.5L145.6 577.5M154.4 566.5L157.4 553.7M73.3 581.2L65.5 586.1M73.3 581.2L74.4 571.4M73.3 581.2L63.6 583.2M73.3 581.2L73.5 570.5M73.3 581.2L83.7 580.1M73.3 581.2L79.9 588.8M73.3 581.2L73.6 587.1M87.4 506.2L96.0 501.2M87.4 506.2L91.0 499.4M87.4 506.2L86.9 512.2M87.4 506.2L88.3 500.4M87.4 506.2L82.6 499.2M104.9 603.5L124.1 596.4M104.9 603.5L88.8 602.7M104.9 603.5L101.7 599.2M104.9 603.5L94.7 602.9M104.9 603.5L109.3 599.3M104.9 603.5L96.7 602.5M65.5 586.1L63.4 589.7M65.5 586.1L63.6 583.2M65.5 586.1L70.0 594.6M65.5 586.1L73.6 587.1M55.8 518.1L59.0 521.9M55.8 518.1L49.8 516.9M55.8 518.1L54.6 516.4M55.8 518.1L55.6 530.9M65.0 567.3L60.6 561.3M65.0 567.3L61.3 567.5M65.0 567.3L63.6 583.2M65.0 567.3L73.5 570.5M65.0 567.3L56.8 578.1M145.6 501.4L135.7 503.4M145.6 501.4L149.8 512.2M145.6 501.4L144.4 497.7M145.6 501.4L152.9 510.7M145.6 501.4L154.3 509.1M145.6 501.4L145.7 498.9M135.7 503.4L149.8 512.2M135.7 503.4L144.4 497.7M135.7 503.4L134.5 498.7M135.7 503.4L149.5 512.8M135.7 503.4L131.5 507.4M135.7 503.4L130.9 506.2M135.7 503.4L149.0 514.7M127.3 501.3L122.9 491.1M127.3 501.3L130.4 494.2M127.3 501.3L130.9 506.2M127.3 501.3L115.9 506.2M127.3 501.3L122.7 513.5M127.3 501.3L115.9 502.9M77.5 555.7L70.7 557.4M77.5 555.7L81.2 551.7M77.5 555.7L79.1 549.0M124.1 596.4L122.9 591.1M124.1 596.4L131.2 593.7M124.1 596.4L109.3 599.3M72.3 506.5L66.1 506.1M72.3 506.5L70.9 503.3M48.7 569.3L57.4 562.5M48.7 569.3L61.3 567.5M48.7 569.3L43.7 551.1M49.5 541.0L50.3 538.1M49.5 541.0L54.5 545.7M49.5 541.0L47.7 543.7M49.5 541.0L45.1 542.0M49.5 541.0L45.3 536.6M67.8 493.8L83.1 485.3M67.8 493.8L69.8 494.3M67.8 493.8L64.5 496.3M67.8 493.8L68.5 494.6M67.8 493.8L84.3 484.4M126.8 533.6L132.4 531.1M126.8 533.6L125.6 537.7M126.8 533.6L126.0 528.9M126.8 533.6L134.6 535.7M126.8 533.6L118.4 529.9M122.9 491.1L107.8 489.4M122.9 491.1L130.4 494.2M122.9 491.1L115.3 502.2M122.9 491.1L124.7 488.9M122.9 491.1L108.1 490.2M122.9 491.1L115.9 502.9M128.1 567.5L117.5 566.5M128.1 567.5L133.6 560.2M128.1 567.5L130.1 555.3M128.1 567.5L117.6 558.4M128.1 567.5L121.2 579.2M149.8 512.2L149.5 512.8M149.8 512.2L152.9 510.7M90.9 518.5L96.6 522.0M90.9 518.5L86.9 512.2M90.9 518.5L94.1 519.2M90.9 518.5L96.7 528.4M79.2 594.1L83.5 597.3M79.2 594.1L76.0 597.9M79.2 594.1L80.7 599.7M79.2 594.1L79.9 588.8M79.2 594.1L74.3 592.3M79.2 594.1L86.4 589.6M95.7 485.4L97.5 487.1M95.7 485.4L95.3 495.6M95.7 485.4L102.0 482.0M95.7 485.4L87.0 484.9M52.9 550.9L50.6 550.7M52.9 550.9L54.5 545.7M52.9 550.9L63.9 555.5M52.9 550.9L56.5 546.9M71.8 530.4L74.1 529.0M71.8 530.4L71.8 530.0M71.8 530.4L66.9 531.2M71.8 530.4L69.7 535.5M74.1 529.0L71.8 530.0M74.1 529.0L82.0 542.7M74.1 529.0L64.2 524.2M74.1 529.0L69.7 535.5M131.8 583.5L139.3 591.5M131.8 583.5L143.0 581.0M131.8 583.5L121.2 579.2M63.4 589.7L63.6 583.2M63.4 589.7L70.0 594.6M57.4 562.5L60.6 561.3M57.4 562.5L61.3 567.5M158.8 564.2L158.7 566.5M96.0 501.2L91.0 499.4M96.0 501.2L95.3 495.6M96.0 501.2L86.9 512.2M96.0 501.2L103.3 506.1M96.0 501.2L99.7 501.1M89.7 568.3L74.4 571.4M89.7 568.3L83.7 580.1M89.7 568.3L93.9 580.5M89.7 568.3L92.3 561.7M89.7 568.3L96.2 564.7M50.6 550.7L54.5 545.7M50.6 550.7L47.7 543.7M50.6 550.7L43.7 551.1M50.6 550.7L45.8 544.8M149.7 527.2L141.9 531.7M149.7 527.2L151.9 526.8M149.7 527.2L149.4 531.6M149.7 527.2L149.0 514.7M144.4 497.7L134.5 498.7M144.4 497.7L145.7 498.9M144.4 497.7L135.8 493.7M95.5 594.4L89.0 602.7M95.5 594.4L92.2 590.7M95.5 594.4L101.7 599.2M95.5 594.4L94.7 602.9M95.5 594.4L96.7 602.5M95.5 594.4L86.4 601.2M53.6 578.8L56.8 578.1M59.0 521.9L63.8 527.0M59.0 521.9L64.2 524.2M59.0 521.9L55.6 530.9M59.0 521.9L63.0 519.1M145.0 582.1L148.7 583.6M145.0 582.1L146.9 585.1M145.0 582.1L149.7 580.6M145.0 582.1L143.0 581.0M145.0 582.1L145.6 577.5M114.4 504.7L115.3 502.2M114.4 504.7L115.9 506.2M114.4 504.7L103.3 506.1M114.4 504.7L106.0 510.9M114.4 504.7L115.9 502.9M75.5 598.0L88.8 602.7M75.5 598.0L76.0 597.9M75.5 598.0L80.7 599.7M75.5 598.0L74.3 592.3M148.7 583.6L139.3 591.5M148.7 583.6L146.9 585.1M148.7 583.6L149.7 580.6M148.7 583.6L154.3 575.3M148.7 583.6L156.3 573.5M91.0 499.4L95.3 495.6M91.0 499.4L83.5 488.8M91.0 499.4L88.3 500.4M50.3 538.1L46.8 531.5M50.3 538.1L54.5 545.7M50.3 538.1L45.3 536.6M50.3 538.1L55.6 530.9M153.0 551.6L139.0 550.1M153.0 551.6L154.4 550.0M153.0 551.6L133.6 560.2M153.0 551.6L157.4 553.7M71.8 530.0L63.8 527.0M71.8 530.0L66.9 531.2M71.8 530.0L64.2 524.2M107.8 489.4L97.5 487.1M107.8 489.4L124.7 488.9M107.8 489.4L102.0 482.0M107.8 489.4L108.1 490.2M139.0 550.1L141.9 531.7M139.0 550.1L154.4 550.0M139.0 550.1L133.6 560.2M139.0 550.1L135.5 545.4M139.0 550.1L130.1 555.3M139.0 550.1L149.4 531.6M73.9 498.6L70.6 499.0M73.9 498.6L69.8 494.3M73.9 498.6L83.5 488.8M73.9 498.6L82.6 499.2M73.9 498.6L70.9 503.3M103.0 567.5L93.9 580.5M103.0 567.5L108.2 584.9M103.0 567.5L115.2 569.9M103.0 567.5L96.2 564.7M60.6 561.3L61.3 567.5M60.6 561.3L70.7 557.4M60.6 561.3L63.9 555.5M157.7 569.6L158.7 566.5M157.7 569.6L154.0 570.1M157.7 569.6L156.3 573.5M46.8 531.5L45.3 536.6M46.8 531.5L55.6 530.9M46.8 531.5L42.1 534.9M132.4 531.1L141.9 531.7M132.4 531.1L126.0 528.9M132.4 531.1L134.6 535.7M83.5 597.3L92.2 590.7M83.5 597.3L80.7 599.7M83.5 597.3L86.4 589.6M83.5 597.3L86.4 601.2M134.5 498.7L135.8 493.7M156.6 524.7L151.9 526.8M156.6 524.7L159.5 529.0M156.6 524.7L160.1 520.8M156.6 524.7L149.0 514.7M54.5 545.7L56.5 546.9M54.5 545.7L47.7 543.7M54.5 545.7L55.6 530.9M149.5 512.8L152.9 510.7M149.5 512.8L149.0 514.7M152.9 510.7L154.3 509.1M152.9 510.7L160.1 520.8M152.9 510.7L149.0 514.7M97.5 487.1L95.3 495.6M97.5 487.1L102.0 482.0M97.5 487.1L108.1 490.2M130.4 494.2L124.7 488.9M130.4 494.2L132.5 492.5M130.4 494.2L132.6 493.2M117.5 566.5L115.2 569.9M117.5 566.5L117.6 558.4M117.5 566.5L121.2 579.2M111.5 530.6L116.1 549.6M111.5 530.6L105.4 531.3M111.5 530.6L108.6 526.5M61.3 567.5L56.8 578.1M89.0 602.7L88.8 602.7M89.0 602.7L88.2 602.4M89.0 602.7L94.7 602.9M89.0 602.7L86.4 601.2M63.8 527.0L66.9 531.2M63.8 527.0L64.2 524.2M63.8 527.0L55.6 530.9M131.5 507.4L130.9 506.2M131.5 507.4L122.7 513.5M131.5 507.4L149.0 514.7M70.7 557.4L63.9 555.5M70.7 557.4L79.1 549.0M154.0 570.1L154.3 575.3M154.0 570.1L145.6 577.5M88.8 602.7L80.7 599.7M88.8 602.7L88.2 602.4M88.8 602.7L94.7 602.9M92.2 590.7L93.9 580.5M92.2 590.7L86.4 589.6M92.2 590.7L86.4 601.2M83.1 485.3L69.8 494.3M83.1 485.3L83.5 488.8M83.1 485.3L84.3 484.4M141.9 531.7L135.5 545.4M141.9 531.7L149.4 531.6M141.9 531.7L134.6 535.7M66.9 531.2L69.7 535.5M66.9 531.2L55.6 530.9M101.7 599.2L109.3 599.3M101.7 599.2L96.7 602.5M96.6 522.0L94.1 519.2M96.6 522.0L106.0 510.9M96.6 522.0L104.8 522.9M96.6 522.0L103.9 524.2M96.6 522.0L96.7 528.4M139.3 591.5L146.9 585.1M139.3 591.5L143.0 581.0M139.3 591.5L131.2 593.7M123.5 551.4L116.1 549.6M123.5 551.4L130.1 555.3M123.5 551.4L117.6 558.4M70.6 499.0L69.8 494.3M70.6 499.0L68.5 494.6M70.6 499.0L66.4 500.3M70.6 499.0L70.9 503.3M74.4 571.4L73.5 570.5M74.4 571.4L83.7 580.1M63.9 555.5L56.5 546.9M63.9 555.5L78.4 544.3M63.9 555.5L69.7 535.5M63.9 555.5L79.1 549.0M116.1 549.6L105.4 531.3M116.1 549.6L117.6 558.4M86.7 545.1L82.0 542.7M86.7 545.1L83.3 546.1M86.7 545.1L92.3 561.7M86.7 545.1L96.7 528.4M54.7 505.0L64.5 496.3M54.7 505.0L62.8 502.2M54.7 505.0L48.0 516.5M164.1 536.3L159.5 529.0M164.1 536.3L160.1 520.8M164.1 536.3L149.4 531.6M154.4 550.0L149.4 531.6M154.4 550.0L157.4 553.7M41.9 536.5L45.1 542.0M41.9 536.5L45.3 536.6M41.9 536.5L43.7 551.1M41.9 536.5L42.1 534.9M56.5 546.9L69.7 535.5M56.5 546.9L55.6 530.9M66.1 506.1L65.8 500.9M66.1 506.1L62.8 502.2M66.1 506.1L70.9 503.3M130.9 506.2L122.7 513.5M47.7 543.7L45.1 542.0M47.7 543.7L45.8 544.8M49.8 516.9L54.6 516.4M49.8 516.9L48.0 516.5M82.0 542.7L78.4 544.3M82.0 542.7L69.7 535.5M82.0 542.7L83.3 546.1M82.0 542.7L96.7 528.4M115.3 502.2L103.3 506.1M115.3 502.2L99.7 501.1M115.3 502.2L108.1 490.2M115.3 502.2L115.9 502.9M154.3 509.1L145.7 498.9M154.3 509.1L160.1 520.8M76.0 597.9L80.7 599.7M76.0 597.9L74.3 592.3M95.3 495.6L83.5 488.8M95.3 495.6L99.7 501.1M95.3 495.6L87.0 484.9M95.3 495.6L108.1 490.2M69.8 494.3L83.5 488.8M69.8 494.3L68.5 494.6M63.6 583.2L73.5 570.5M63.6 583.2L56.8 578.1M115.9 506.2L122.7 513.5M115.9 506.2L106.0 510.9M115.9 506.2L115.9 502.9M83.5 488.8L88.3 500.4M83.5 488.8L84.3 484.4M83.5 488.8L82.6 499.2M83.5 488.8L87.0 484.9M78.4 544.3L69.7 535.5M78.4 544.3L83.3 546.1M78.4 544.3L79.1 549.0M64.2 524.2L63.0 519.1M151.9 526.8L159.5 529.0M151.9 526.8L149.4 531.6M151.9 526.8L149.0 514.7M64.5 496.3L65.8 500.9M64.5 496.3L62.8 502.2M64.5 496.3L68.5 494.6M64.5 496.3L66.4 500.3M65.8 500.9L62.8 502.2M65.8 500.9L66.4 500.3M65.8 500.9L70.9 503.3M105.4 531.3L108.6 526.5M105.4 531.3L103.9 524.2M105.4 531.3L96.7 528.4M80.7 599.7L88.2 602.4M80.7 599.7L86.4 601.2M83.7 580.1L93.9 580.5M83.7 580.1L79.9 588.8M83.7 580.1L86.4 589.6M86.9 512.2L94.1 519.2M86.9 512.2L103.3 506.1M88.2 602.4L86.4 601.2M133.6 560.2L130.1 555.3M93.9 580.5L108.2 584.9M93.9 580.5L86.4 589.6M93.9 580.5L96.2 564.7M88.3 500.4L82.6 499.2M45.1 542.0L45.3 536.6M45.1 542.0L43.7 551.1M45.1 542.0L45.8 544.8M69.7 535.5L55.6 530.9M159.5 529.0L160.1 520.8M159.5 529.0L149.4 531.6M124.7 488.9L132.5 492.5M124.7 488.9L135.8 493.7M125.6 537.7L135.5 545.4M125.6 537.7L134.6 535.7M125.6 537.7L118.4 529.9M94.1 519.2L103.3 506.1M94.1 519.2L106.0 510.9M108.6 526.5L122.7 513.5M108.6 526.5L106.0 510.9M108.6 526.5L104.8 522.9M108.6 526.5L103.9 524.2M103.3 506.1L99.7 501.1M103.3 506.1L106.0 510.9M160.1 520.8L149.0 514.7M70.0 594.6L74.3 592.3M70.0 594.6L73.6 587.1M79.9 588.8L74.3 592.3M79.9 588.8L73.6 587.1M79.9 588.8L86.4 589.6M135.5 545.4L130.1 555.3M135.5 545.4L134.6 535.7M130.1 555.3L117.6 558.4M83.3 546.1L81.2 551.7M83.3 546.1L79.1 549.0M149.7 580.6L154.3 575.3M45.3 536.6L42.1 534.9M68.5 494.6L66.4 500.3M132.5 492.5L132.6 493.2M132.5 492.5L135.8 493.7M48.0 516.5L42.1 534.9M74.3 592.3L73.6 587.1M84.3 484.4L102.0 482.0M84.3 484.4L87.0 484.9M122.9 591.1L131.2 593.7M122.9 591.1L120.7 591.5M122.9 591.1L121.2 579.2M92.3 561.7L96.2 564.7M143.0 581.0L145.6 577.5M81.2 551.7L79.1 549.0M108.2 584.9L115.2 569.9M108.2 584.9L121.2 579.2M122.7 513.5L126.0 528.9M122.7 513.5L106.0 510.9M126.0 528.9L118.4 529.9M94.7 602.9L96.7 602.5M66.4 500.3L70.9 503.3M99.7 501.1L108.1 490.2M115.2 569.9L121.2 579.2M106.0 510.9L104.8 522.9M154.3 575.3L156.3 573.5M43.7 551.1L45.8 544.8M132.6 493.2L135.8 493.7M102.0 482.0L87.0 484.9M104.8 522.9L103.9 524.2M103.9 524.2L96.7 528.4" stroke="#3f94cf" stroke-width=".4" opacity=".8" fill="none"/>
<circle cx="114.9" cy="529.7" r=".55" fill="#8fd0f7"/><circle cx="99.9" cy="559.3" r=".55" fill="#8fd0f7"/><circle cx="108.1" cy="587.2" r=".55" fill="#8fd0f7"/><circle cx="104.6" cy="558.7" r=".55" fill="#8fd0f7"/><circle cx="160.4" cy="558.9" r=".55" fill="#8fd0f7"/><circle cx="70.8" cy="565.2" r=".55" fill="#8fd0f7"/><circle cx="82.0" cy="518.9" r=".55" fill="#8fd0f7"/><circle cx="155.7" cy="573.1" r=".55" fill="#8fd0f7"/><circle cx="164.3" cy="537.7" r=".55" fill="#8fd0f7"/><circle cx="48.7" cy="571.7" r=".55" fill="#8fd0f7"/><circle cx="55.1" cy="515.0" r=".55" fill="#8fd0f7"/><circle cx="132.5" cy="518.1" r=".55" fill="#8fd0f7"/><circle cx="132.9" cy="595.7" r=".55" fill="#8fd0f7"/><circle cx="62.0" cy="515.4" r=".55" fill="#8fd0f7"/><circle cx="76.7" cy="509.9" r=".55" fill="#8fd0f7"/><circle cx="110.0" cy="595.0" r=".55" fill="#8fd0f7"/><circle cx="121.3" cy="592.4" r=".55" fill="#8fd0f7"/><circle cx="50.5" cy="512.4" r=".55" fill="#8fd0f7"/><circle cx="131.7" cy="499.0" r=".55" fill="#8fd0f7"/><circle cx="50.5" cy="563.6" r=".55" fill="#8fd0f7"/><circle cx="154.4" cy="566.5" r=".55" fill="#8fd0f7"/><circle cx="87.4" cy="506.2" r=".55" fill="#8fd0f7"/><circle cx="65.5" cy="586.1" r=".55" fill="#8fd0f7"/><circle cx="65.0" cy="567.3" r=".55" fill="#8fd0f7"/><circle cx="135.7" cy="503.4" r=".55" fill="#8fd0f7"/><circle cx="77.5" cy="555.7" r=".55" fill="#8fd0f7"/><circle cx="72.3" cy="506.5" r=".55" fill="#8fd0f7"/><circle cx="49.5" cy="541.0" r=".55" fill="#8fd0f7"/><circle cx="126.8" cy="533.6" r=".55" fill="#8fd0f7"/><circle cx="128.1" cy="567.5" r=".55" fill="#8fd0f7"/><circle cx="90.9" cy="518.5" r=".55" fill="#8fd0f7"/><circle cx="95.7" cy="485.4" r=".55" fill="#8fd0f7"/><circle cx="71.8" cy="530.4" r=".55" fill="#8fd0f7"/><circle cx="131.8" cy="583.5" r=".55" fill="#8fd0f7"/><circle cx="57.4" cy="562.5" r=".55" fill="#8fd0f7"/><circle cx="96.0" cy="501.2" r=".55" fill="#8fd0f7"/><circle cx="50.6" cy="550.7" r=".55" fill="#8fd0f7"/><circle cx="144.4" cy="497.7" r=".55" fill="#8fd0f7"/><circle cx="53.6" cy="578.8" r=".55" fill="#8fd0f7"/><circle cx="145.0" cy="582.1" r=".55" fill="#8fd0f7"/><circle cx="75.5" cy="598.0" r=".55" fill="#8fd0f7"/><circle cx="91.0" cy="499.4" r=".55" fill="#8fd0f7"/><circle cx="153.0" cy="551.6" r=".55" fill="#8fd0f7"/><circle cx="107.8" cy="489.4" r=".55" fill="#8fd0f7"/><circle cx="73.9" cy="498.6" r=".55" fill="#8fd0f7"/><circle cx="60.6" cy="561.3" r=".55" fill="#8fd0f7"/><circle cx="46.8" cy="531.5" r=".55" fill="#8fd0f7"/><circle cx="83.5" cy="597.3" r=".55" fill="#8fd0f7"/><circle cx="134.5" cy="498.7" r=".55" fill="#8fd0f7"/><circle cx="54.5" cy="545.7" r=".55" fill="#8fd0f7"/><circle cx="152.9" cy="510.7" r=".55" fill="#8fd0f7"/><circle cx="130.4" cy="494.2" r=".55" fill="#8fd0f7"/><circle cx="111.5" cy="530.6" r=".55" fill="#8fd0f7"/><circle cx="89.0" cy="602.7" r=".55" fill="#8fd0f7"/><circle cx="131.5" cy="507.4" r=".55" fill="#8fd0f7"/><circle cx="154.0" cy="570.1" r=".55" fill="#8fd0f7"/><circle cx="92.2" cy="590.7" r=".55" fill="#8fd0f7"/><circle cx="141.9" cy="531.7" r=".55" fill="#8fd0f7"/><circle cx="101.7" cy="599.2" r=".55" fill="#8fd0f7"/><circle cx="139.3" cy="591.5" r=".55" fill="#8fd0f7"/><circle cx="70.6" cy="499.0" r=".55" fill="#8fd0f7"/><circle cx="63.9" cy="555.5" r=".55" fill="#8fd0f7"/><circle cx="86.7" cy="545.1" r=".55" fill="#8fd0f7"/><circle cx="164.1" cy="536.3" r=".55" fill="#8fd0f7"/><circle cx="41.9" cy="536.5" r=".55" fill="#8fd0f7"/><circle cx="66.1" cy="506.1" r=".55" fill="#8fd0f7"/><circle cx="47.7" cy="543.7" r=".55" fill="#8fd0f7"/><circle cx="82.0" cy="542.7" r=".55" fill="#8fd0f7"/><circle cx="154.3" cy="509.1" r=".55" fill="#8fd0f7"/><circle cx="95.3" cy="495.6" r=".55" fill="#8fd0f7"/><circle cx="63.6" cy="583.2" r=".55" fill="#8fd0f7"/><circle cx="83.5" cy="488.8" r=".55" fill="#8fd0f7"/><circle cx="64.2" cy="524.2" r=".55" fill="#8fd0f7"/><circle cx="64.5" cy="496.3" r=".55" fill="#8fd0f7"/><circle cx="73.5" cy="570.5" r=".55" fill="#8fd0f7"/><circle cx="145.7" cy="498.9" r=".55" fill="#8fd0f7"/><circle cx="83.7" cy="580.1" r=".55" fill="#8fd0f7"/><circle cx="88.2" cy="602.4" r=".55" fill="#8fd0f7"/><circle cx="93.9" cy="580.5" r=".55" fill="#8fd0f7"/><circle cx="45.1" cy="542.0" r=".55" fill="#8fd0f7"/><circle cx="62.8" cy="502.2" r=".55" fill="#8fd0f7"/><circle cx="159.5" cy="529.0" r=".55" fill="#8fd0f7"/><circle cx="125.6" cy="537.7" r=".55" fill="#8fd0f7"/><circle cx="108.6" cy="526.5" r=".55" fill="#8fd0f7"/><circle cx="160.1" cy="520.8" r=".55" fill="#8fd0f7"/><circle cx="79.9" cy="588.8" r=".55" fill="#8fd0f7"/><circle cx="130.1" cy="555.3" r=".55" fill="#8fd0f7"/><circle cx="83.3" cy="546.1" r=".55" fill="#8fd0f7"/><circle cx="149.7" cy="580.6" r=".55" fill="#8fd0f7"/><circle cx="68.5" cy="494.6" r=".55" fill="#8fd0f7"/><circle cx="48.0" cy="516.5" r=".55" fill="#8fd0f7"/><circle cx="84.3" cy="484.4" r=".55" fill="#8fd0f7"/><circle cx="92.3" cy="561.7" r=".55" fill="#8fd0f7"/><circle cx="82.6" cy="499.2" r=".55" fill="#8fd0f7"/><circle cx="81.2" cy="551.7" r=".55" fill="#8fd0f7"/><circle cx="122.7" cy="513.5" r=".55" fill="#8fd0f7"/><circle cx="126.0" cy="528.9" r=".55" fill="#8fd0f7"/><circle cx="66.4" cy="500.3" r=".55" fill="#8fd0f7"/><circle cx="131.2" cy="593.7" r=".55" fill="#8fd0f7"/><circle cx="106.0" cy="510.9" r=".55" fill="#8fd0f7"/><circle cx="43.7" cy="551.1" r=".55" fill="#8fd0f7"/><circle cx="134.6" cy="535.7" r=".55" fill="#8fd0f7"/><circle cx="109.3" cy="599.3" r=".55" fill="#8fd0f7"/><circle cx="102.0" cy="482.0" r=".55" fill="#8fd0f7"/><circle cx="96.7" cy="602.5" r=".55" fill="#8fd0f7"/><circle cx="87.0" cy="484.9" r=".55" fill="#8fd0f7"/><circle cx="117.6" cy="558.4" r=".55" fill="#8fd0f7"/><circle cx="104.8" cy="522.9" r=".55" fill="#8fd0f7"/><circle cx="120.7" cy="591.5" r=".55" fill="#8fd0f7"/><circle cx="103.9" cy="524.2" r=".55" fill="#8fd0f7"/><circle cx="108.1" cy="490.2" r=".55" fill="#8fd0f7"/><circle cx="96.7" cy="528.4" r=".55" fill="#8fd0f7"/><circle cx="118.4" cy="529.9" r=".55" fill="#8fd0f7"/><circle cx="149.0" cy="514.7" r=".55" fill="#8fd0f7"/><circle cx="86.4" cy="601.2" r=".55" fill="#8fd0f7"/>
</svg></g>
<g clip-path="url(#tc3)"><rect x="38.6" y="587.0" width="172.2" height="96.4" fill="#fff"/>
<svg x="124.7" y="587.0" width="86.1" height="96.4" viewBox="124.7 587.0 86.1 96.4"><rect x="124.7" y="587.0" width="90" height="96.4" fill="#07030f"/><ellipse cx="168" cy="632" rx="46" ry="30" fill="url(#t4a)" transform="rotate(-35 168 632)"/><ellipse cx="190" cy="610" rx="28" ry="18" fill="#8a35d0" opacity=".7" filter="url(#tb4)"/><ellipse cx="150" cy="600" rx="22" ry="12" fill="#8a3aa8" opacity=".5" filter="url(#tb4)"/><circle cx="134" cy="586" r="42" fill="#1a0d26" stroke="#e9c8f2" stroke-width="1.100" opacity=".95"/><circle cx="134" cy="586" r="40" fill="none" stroke="#9a4ab0" stroke-width="3" opacity=".45" filter="url(#tb1)"/><circle cx="191.500" cy="648.700" r="12.500" fill="#140a22" stroke="#e8d8f0" stroke-width="1"/><circle cx="166.300" cy="614.500" r="8" fill="url(#t4b)"/><circle cx="138.800" cy="650.500" r="10" fill="url(#t4b)"/></svg></g>
<g clip-path="url(#tc4)"><rect x="38.6" y="706.7" width="172.2" height="96.4" fill="url(#t5g)"/><circle cx="205" cy="800" r="52" fill="url(#t5n)"/><polygon points="104,804 128,804 153,774 139,768" fill="#0e2838" opacity=".85" filter="url(#tb2)"/><circle cx="144" cy="750" r="40" fill="url(#t5r)"/><ellipse cx="143.500" cy="747.500" rx="14" ry="12.500" fill="#1d5650" transform="rotate(-35 143.5 747.5)" filter="url(#tb1)"/><path d="M131 752c2-12 12-18 24-16M136 760c10 2 20-4 24-14" stroke="#efffe8" stroke-width="1" fill="none" opacity=".8" filter="url(#tb1)"/><g fill="none" stroke="#bfeee4" stroke-width=".3" opacity=".5"><circle cx="146" cy="752" r="46"/><circle cx="147" cy="752" r="49"/><circle cx="148" cy="752" r="52"/><circle cx="149" cy="752" r="55"/><circle cx="150" cy="752" r="58"/></g><circle cx="144" cy="755" r="64" fill="none" stroke="#ecd0dc" stroke-width=".6" opacity=".85" stroke-dasharray="179 223" stroke-dashoffset="89"/></g>
<g clip-path="url(#tc5)"><rect x="38.6" y="827.0" width="172.2" height="96.4" fill="url(#t6g)"/><ellipse cx="120" cy="868" rx="70" ry="11" fill="#6a7f96" opacity=".4" filter="url(#tb4)" transform="rotate(38 120 868)"/><rect x="38.6" y="827.0" width="172.2" height="96.4" filter="url(#tstars)" opacity=".32"/><circle cx="34" cy="922" r="58" fill="url(#t6m)"/><circle cx="218" cy="928" r="46" fill="url(#t6m)" opacity=".85"/></g>
</svg>
<div id="thumbtext"><span class="f tt" style="top:236.70px;left:50.9px;--s:6.4px;--b:242.7px;letter-spacing:0.081px;color:#222">Introduction to Black</span>
<span class="f tt" style="top:244.40px;left:50.9px;--s:6.4px;--b:250.4px;letter-spacing:0.031px;color:#222">Holes</span>
<span class="f tt" style="top:286.70px;left:50.9px;--s:3.3px;--b:288.7px;letter-spacing:0.844px;color:#222">•</span>
<span class="f tt" style="top:286.70px;left:54.2px;--s:3.3px;--b:288.7px;letter-spacing:0.061px;color:#333">Black holes are regions in space where</span>
<span class="f tt" style="top:290.50px;left:54.2px;--s:3.3px;--b:292.5px;letter-spacing:0.075px;color:#333">the gravitational pull is so strong that</span>
<span class="f tt" style="top:294.40px;left:54.2px;--s:3.3px;--b:296.4px;letter-spacing:0.073px;color:#333">nothing, not even light, can escape.</span>
<span class="f tt" style="top:356.20px;left:51.4px;--s:6.2px;--b:362.2px;letter-spacing:-0.168px;color:#222">Formation of Black Holes</span>
<span class="f tt" style="top:366.20px;left:51.4px;--s:2px;--b:368.2px;letter-spacing:0.187px;color:#444">Black holes form when massive stars collapse at the end of their</span>
<span class="f tt" style="top:368.40px;left:51.4px;--s:2px;--b:370.4px;letter-spacing:-0.067px;color:#444">lifecycle.</span>
<span class="f tt" style="top:482.00px;left:135.7px;--s:6.4px;--b:488px;letter-spacing:0.010px;color:#222">Types of Black</span>
<span class="f tt" style="top:489.70px;left:135.7px;--s:6.4px;--b:495.7px;letter-spacing:0.031px;color:#222">Holes</span>
<span class="f tt" style="top:520.90px;left:136.2px;--s:3.3px;--b:522.9px;letter-spacing:0.844px;color:#222">•</span>
<span class="f tt" style="top:520.90px;left:138.8px;--s:3.3px;--b:522.9px;letter-spacing:0.043px;color:#333">There are three main types of</span>
<span class="f tt" style="top:524.80px;left:138.8px;--s:3.3px;--b:526.8px;letter-spacing:0.088px;color:#333">black holes: Stellar black holes,</span>
<span class="f tt" style="top:528.60px;left:138.8px;--s:3.3px;--b:530.6px;letter-spacing:0.081px;color:#333">Supermassive black holes, and</span>
<span class="f tt" style="top:532.70px;left:138.8px;--s:3.3px;--b:534.7px;letter-spacing:0.094px;color:#333">Intermediate black holes.</span>
<span class="f tt" style="top:599.50px;left:50.9px;--s:6.4px;--b:605.5px;letter-spacing:0.020px;color:#222">Event Horizon</span>
<span class="f tt" style="top:645.90px;left:50.9px;--s:3.3px;--b:647.9px;letter-spacing:0.844px;color:#222">•</span>
<span class="f tt" style="top:645.90px;left:54.2px;--s:3.3px;--b:647.9px;letter-spacing:0.056px;color:#333">The event horizon is the boundary</span>
<span class="f tt" style="top:649.70px;left:54.2px;--s:3.3px;--b:651.7px;letter-spacing:0.076px;color:#333">surrounding a black hole beyond</span>
<span class="f tt" style="top:653.60px;left:54.2px;--s:3.3px;--b:655.6px;letter-spacing:0.096px;color:#333">which no information can escape.</span>
<span class="f tt" style="top:721.30px;left:52.2px;--s:6.4px;--b:727.3px;letter-spacing:0.023px;color:#222">Singularity</span>
<span class="f tt" style="top:743.00px;left:52.7px;--s:3.3px;--b:745px;letter-spacing:0.844px;color:#222">•</span>
<span class="f tt" style="top:743.00px;left:55.3px;--s:3.3px;--b:745px;letter-spacing:0.056px;color:#333">At the center of a black hole</span>
<span class="f tt" style="top:746.60px;left:55.3px;--s:3.3px;--b:748.6px;letter-spacing:0.073px;color:#333">lies the singularity, a point of</span>
<span class="f tt" style="top:750.20px;left:55.3px;--s:3.3px;--b:752.2px;letter-spacing:0.114px;color:#333">infinite density where space</span>
<span class="f tt" style="top:753.80px;left:55.3px;--s:3.3px;--b:755.8px;letter-spacing:0.123px;color:#333">and time break down.</span>
<span class="f tt" style="top:898.10px;left:52.2px;--s:6.4px;--b:904.1px;letter-spacing:0.033px;color:#fff">Supermassive Black Holes</span>
<span class="f tt" style="top:908.10px;left:52.2px;--s:2.8px;--b:910.1px;letter-spacing:0.200px;color:#fff">Supermassive black holes are found at the centers of most galaxies.</span></div>
<svg id="larrows" style="left:0;top:0" width="252" height="949" viewBox="0 0 252 949"><path d="M235.500 219.500l5-6.500 5 6.500z" fill="#6a6a6a"/><path d="M235.500 898.300l5 6.500 5-6.500z" fill="#6a6a6a"/></svg><!--LEFT-END-->

<!-- ================= MAIN ================= -->
<div id="main" class="abs"></div>
<div id="slide" class="abs">
  <div class="abs" style="left:0;top:216px;width:578px;height:50px;background:linear-gradient(to bottom,rgba(0,0,0,.085),rgba(0,0,0,.045) 35%,rgba(0,0,0,.015) 70%,rgba(0,0,0,0));-webkit-mask-image:linear-gradient(to right,transparent 0,#000 70px);mask-image:linear-gradient(to right,transparent 0,#000 70px)"></div>
  <span class="f" style="top:56.20px;left:79.5px;--s:44px;--b:97.2px;letter-spacing:0.158px;color:#0d0d0d;-webkit-text-stroke:.2px #0d0d0d">Introduction to Black</span>
  <span class="f" style="top:107.20px;left:79.5px;--s:44px;--b:148.2px;letter-spacing:0.200px;color:#0d0d0d;-webkit-text-stroke:.2px #0d0d0d">Holes</span>
  <span class="f" style="top:390.90px;left:80px;--s:22px;--b:410.9px;color:#111">•</span>
  <span class="f" style="top:390.90px;left:102px;--s:22px;--b:410.9px;letter-spacing:0.427px;color:#111;-webkit-text-stroke:.12px #111">Black holes are regions in space where</span>
  <span class="f" style="top:416.50px;left:102px;--s:22px;--b:436.5px;letter-spacing:0.573px;color:#111;-webkit-text-stroke:.12px #111">the gravitational pull is so strong that</span>
  <span class="f" style="top:442.10px;left:102px;--s:22px;--b:462.1px;letter-spacing:0.510px;color:#111;-webkit-text-stroke:.12px #111">nothing, not even light, can escape.</span>
  <!--GALAXY-START--><svg id="galaxy" style="left:576px;top:0" width="578" height="649" viewBox="0 0 578 649">
  <defs>
    <clipPath id="gclip"><rect width="578" height="649"/></clipPath>
    <linearGradient id="gbg" x1="1" y1="0" x2="0.3" y2="1">
      <stop offset="0" stop-color="#000"/><stop offset=".35" stop-color="#000204"/>
      <stop offset=".7" stop-color="#04121a"/><stop offset="1" stop-color="#05131b"/>
    </linearGradient>
    <radialGradient id="gblue" cx=".5" cy=".5" r=".5">
      <stop offset="0" stop-color="#5680ae"/>
      <stop offset=".42" stop-color="#3e6692"/>
      <stop offset=".56" stop-color="#2a4d77"/>
      <stop offset=".7" stop-color="#193a58" stop-opacity=".9"/>
      <stop offset=".85" stop-color="#0e2a3e" stop-opacity=".6"/>
      <stop offset="1" stop-color="#071d2b" stop-opacity="0"/>
    </radialGradient>
    <radialGradient id="gwarm" cx=".5" cy=".5" r=".5">
      <stop offset="0" stop-color="#fff8ec"/>
      <stop offset=".3" stop-color="#fae8d6"/>
      <stop offset=".5" stop-color="#efd2ba"/>
      <stop offset=".68" stop-color="#dcb79c"/>
      <stop offset=".84" stop-color="#be957e"/>
      <stop offset=".94" stop-color="#9a7a72" stop-opacity=".92"/>
      <stop offset="1" stop-color="#8c7890" stop-opacity="0"/>
    </radialGradient>
    <radialGradient id="gcore" cx=".5" cy=".5" r=".5">
      <stop offset="0" stop-color="#fff"/>
      <stop offset=".4" stop-color="#fffbf4" stop-opacity=".97"/>
      <stop offset=".7" stop-color="#fdeedd" stop-opacity=".6"/>
      <stop offset="1" stop-color="#f6d9bb" stop-opacity="0"/>
    </radialGradient>
    <filter id="gb6" x="-20%" y="-20%" width="140%" height="140%"><feGaussianBlur stdDeviation="7"/></filter>
    <filter id="gb5" x="-20%" y="-20%" width="140%" height="140%"><feGaussianBlur stdDeviation="5"/></filter>
    <filter id="gb3" x="-20%" y="-20%" width="140%" height="140%"><feGaussianBlur stdDeviation="1.3"/></filter>
    <filter id="gb1" x="-20%" y="-20%" width="140%" height="140%"><feGaussianBlur stdDeviation=".8"/></filter>
    <filter id="gcloud" x="0" y="0" width="100%" height="100%">
      <feTurbulence type="fractalNoise" baseFrequency=".014 .026" numOctaves="4" seed="7"/>
      <feColorMatrix values="0 0 0 0 0  0 0 0 0 0  0 0 0 0 0  2.4 0 0 0 -.78"/>
      <feComposite in2="SourceGraphic" operator="in"/>
    </filter>
    <filter id="gstars" x="0" y="0" width="100%" height="100%">
      <feTurbulence type="fractalNoise" baseFrequency=".8" numOctaves="1" seed="11"/>
      <feColorMatrix values="0 0 0 0 1  0 0 0 0 1  0 0 0 0 .95  0 10 0 0 -7.3"/>
    </filter>
    <filter id="gstars2" x="0" y="0" width="100%" height="100%">
      <feTurbulence type="fractalNoise" baseFrequency=".3" numOctaves="1" seed="3"/>
      <feColorMatrix values="0 0 0 0 1  0 0 0 0 .98  0 0 0 0 .9  0 12 0 0 -8.9"/>
    </filter>
  </defs>
  <g clip-path="url(#gclip)">
    <rect width="578" height="649" fill="url(#gbg)"/>
    <g transform="translate(258 326) rotate(23)">
      <ellipse rx="455" ry="280" fill="url(#gblue)"/>
      <g filter="url(#gcloud)" opacity=".5"><ellipse rx="445" ry="272" fill="#020c14"/></g>
      <g fill="none" filter="url(#gb6)" stroke-linecap="round">
        <path d="M214.7 6.9 L216.1 12.6 L217.2 18.4 L217.8 24.2 L218.1 30.2 L217.9 36.1 L217.3 42.2 L216.4 48.2 L214.9 54.3 L213.1 60.5 L210.8 66.6 L208.0 72.7 L204.8 78.8 L201.2 84.9 L197.1 90.9 L192.5 96.9 L187.5 102.8 L182.1 108.6 L176.2 114.4 L169.8 120.0 L163.0 125.5 L155.8 130.9 L148.1 136.1 L140.0 141.2 L131.4 146.1 L122.5 150.9 L113.1 155.4 L103.3 159.8 L93.2 163.9 L82.7 167.8 L71.8 171.5 L60.5 174.9 L49.0 178.0 L37.1 180.9 L24.9 183.4 L12.4 185.7 L-0.4 187.7 L-13.4 189.3 L-26.6 190.7 L-40.0 191.6 L-53.7 192.3 L-67.4 192.6 L-81.4 192.5 L-95.4 192.1 L-109.6 191.3 L-123.8 190.1 L-138.1 188.6 L-152.3 186.6 L-166.6 184.3 L-180.9 181.5 L-195.0 178.4 L-209.1 174.9 L-223.1 170.9 L-236.9 166.6 L-250.5 161.8 L-263.9 156.7 L-277.1 151.2 L-290.1 145.2 L-302.7 138.9 L-315.0 132.2 L-326.9 125.1" stroke="#88aad4" stroke-width="13" opacity="0.29"/><path d="M115.0 111.8 L108.3 115.8 L101.3 119.6 L93.9 123.4 L86.2 126.9 L78.1 130.3 L69.8 133.5 L61.2 136.5 L52.3 139.3 L43.1 141.9 L33.6 144.3 L23.9 146.5 L14.0 148.4 L3.8 150.1 L-6.5 151.5 L-17.1 152.7 L-27.8 153.6 L-38.7 154.2 L-49.7 154.6 L-60.8 154.6 L-72.1 154.4 L-83.4 153.9 L-94.8 153.1 L-106.3 151.9 L-117.7 150.5 L-129.2 148.7 L-140.6 146.7 L-152.0 144.3 L-163.4 141.6 L-174.6 138.5 L-185.8 135.2 L-196.8 131.5 L-207.6 127.5 L-218.3 123.2 L-228.8 118.6 L-239.0 113.6 L-249.0 108.4 L-258.7 102.8 L-268.1 96.9 L-277.2 90.7 L-285.9 84.3 L-294.3 77.5 L-302.3 70.5 L-309.8 63.2 L-317.0 55.6 L-323.6 47.8 L-329.8 39.7 L-335.5 31.4 L-340.6 22.9 L-345.2 14.2 L-349.3 5.3 L-352.7 -3.8 L-355.6 -13.1 L-357.8 -22.6 L-359.4 -32.2 L-360.4 -41.9 L-360.7 -51.7 L-360.3 -61.6 L-359.2 -71.6 L-357.4 -81.7 L-355.0 -91.8" stroke="#88aad4" stroke-width="16" opacity="0.37"/><path d="M-107.5 114.6 L-116.4 112.8 L-125.2 110.7 L-134.0 108.4 L-142.7 105.9 L-151.3 103.1 L-159.8 100.0 L-168.1 96.7 L-176.3 93.1 L-184.3 89.4 L-192.1 85.3 L-199.7 81.0 L-207.1 76.5 L-214.3 71.8 L-221.1 66.8 L-227.7 61.6 L-234.0 56.1 L-239.9 50.5 L-245.6 44.6 L-250.8 38.6 L-255.7 32.4 L-260.2 25.9 L-264.3 19.4 L-268.0 12.6 L-271.3 5.7 L-274.1 -1.4 L-276.4 -8.6 L-278.2 -15.9 L-279.6 -23.4 L-280.5 -30.9 L-280.8 -38.5 L-280.6 -46.2 L-279.9 -54.0 L-278.7 -61.8 L-276.8 -69.7 L-274.5 -77.6 L-271.5 -85.4 L-268.0 -93.3 L-263.9 -101.2 L-259.3 -109.0 L-254.0 -116.8 L-248.2 -124.4 L-241.8 -132.1 L-234.8 -139.6 L-227.2 -147.0 L-219.0 -154.2 L-210.3 -161.3 L-201.0 -168.3 L-191.1 -175.0 L-180.6 -181.6 L-169.7 -187.9 L-158.2 -194.1 L-146.1 -199.9 L-133.6 -205.5 L-120.5 -210.9 L-107.0 -215.9 L-93.0 -220.6 L-78.5 -225.0 L-63.6 -229.0 L-48.3 -232.7 L-32.7 -236.1" stroke="#88aad4" stroke-width="12" opacity="0.38"/><path d="M-215.0 2.8 L-217.0 -2.8 L-218.8 -8.6 L-220.1 -14.4 L-221.1 -20.3 L-221.6 -26.2 L-221.8 -32.3 L-221.5 -38.4 L-220.8 -44.5 L-219.7 -50.7 L-218.1 -56.9 L-216.1 -63.2 L-213.6 -69.4 L-210.7 -75.6 L-207.4 -81.8 L-203.5 -88.0 L-199.2 -94.1 L-194.5 -100.1 L-189.3 -106.1 L-183.6 -112.0 L-177.5 -117.8 L-170.9 -123.5 L-163.8 -129.1 L-156.3 -134.6 L-148.4 -139.8 L-140.0 -145.0 L-131.2 -149.9 L-122.0 -154.7 L-112.4 -159.3 L-102.4 -163.6 L-91.9 -167.8 L-81.1 -171.7 L-70.0 -175.3 L-58.4 -178.7 L-46.6 -181.8 L-34.4 -184.6 L-21.9 -187.2 L-9.1 -189.4 L3.9 -191.3 L17.2 -192.9 L30.7 -194.2 L44.4 -195.1 L58.3 -195.7 L72.4 -195.9 L86.6 -195.7 L100.9 -195.2 L115.3 -194.3 L129.8 -192.9 L144.3 -191.3 L158.8 -189.2 L173.3 -186.7 L187.8 -183.8 L202.2 -180.5 L216.5 -176.8 L230.6 -172.7 L244.6 -168.1 L258.5 -163.2 L272.0 -157.9 L285.4 -152.2 L298.5 -146.0 L311.2 -139.5" stroke="#88aad4" stroke-width="16" opacity="0.29"/><path d="M-111.5 -113.1 L-104.7 -117.0 L-97.5 -120.8 L-90.0 -124.4 L-82.2 -127.9 L-74.1 -131.2 L-65.6 -134.3 L-56.9 -137.2 L-47.9 -139.9 L-38.6 -142.4 L-29.1 -144.7 L-19.4 -146.7 L-9.4 -148.5 L0.8 -150.1 L11.2 -151.4 L21.8 -152.5 L32.6 -153.2 L43.5 -153.7 L54.5 -154.0 L65.6 -153.9 L76.9 -153.5 L88.2 -152.9 L99.6 -151.9 L111.0 -150.7 L122.4 -149.1 L133.8 -147.2 L145.2 -145.0 L156.5 -142.5 L167.8 -139.6 L178.9 -136.5 L189.9 -133.0 L200.8 -129.2 L211.6 -125.1 L222.1 -120.6 L232.4 -115.9 L242.5 -110.8 L252.3 -105.4 L261.9 -99.7 L271.1 -93.7 L280.0 -87.5 L288.5 -80.9 L296.7 -74.0 L304.4 -66.9 L311.8 -59.5 L318.6 -51.9 L325.1 -44.0 L331.0 -35.8 L336.4 -27.5 L341.3 -18.9 L345.6 -10.1 L349.4 -1.1 L352.5 8.0 L355.1 17.3 L357.1 26.8 L358.4 36.4 L359.0 46.1 L359.0 55.9 L358.3 65.8 L356.9 75.8 L354.8 85.9 L352.0 95.9" stroke="#88aad4" stroke-width="15" opacity="0.37"/><path d="M84.6 -121.6 L93.8 -120.5 L102.9 -119.1 L112.1 -117.5 L121.2 -115.6 L130.3 -113.4 L139.3 -111.0 L148.2 -108.3 L157.0 -105.4 L165.7 -102.2 L174.3 -98.8 L182.7 -95.1 L190.9 -91.1 L198.9 -86.9 L206.7 -82.5 L214.2 -77.8 L221.5 -72.9 L228.5 -67.7 L235.2 -62.3 L241.6 -56.7 L247.7 -50.9 L253.4 -44.8 L258.7 -38.6 L263.7 -32.1 L268.2 -25.5 L272.4 -18.7 L276.1 -11.7 L279.3 -4.6 L282.1 2.7 L284.4 10.1 L286.3 17.7 L287.6 25.4 L288.4 33.1 L288.6 41.0 L288.3 48.9 L287.5 56.9 L286.1 65.0 L284.2 73.0 L281.6 81.1 L278.5 89.2 L274.8 97.3 L270.5 105.4 L265.6 113.4 L260.1 121.4 L254.0 129.3 L247.3 137.1 L239.9 144.8 L232.0 152.4 L223.6 159.8 L214.5 167.1 L204.8 174.2 L194.5 181.1 L183.7 187.8 L172.3 194.3 L160.4 200.5 L147.9 206.5 L135.0 212.2 L121.5 217.6 L107.5 222.8 L93.0 227.5 L78.1 232.0" stroke="#88aad4" stroke-width="16" opacity="0.28"/><path d="M187.9 76.2 L184.2 81.9 L180.0 87.6 L175.4 93.3 L170.3 98.9 L164.8 104.4 L158.9 109.8 L152.5 115.1 L145.7 120.3 L138.4 125.3 L130.7 130.2 L122.6 134.9 L114.1 139.4 L105.2 143.8 L95.9 147.9 L86.2 151.9 L76.2 155.6 L65.8 159.1 L55.0 162.3 L44.0 165.2 L32.6 167.9 L20.9 170.3 L8.9 172.4 L-3.3 174.3 L-15.8 175.8 L-28.4 176.9 L-41.3 177.8 L-54.4 178.3 L-67.6 178.4 L-80.9 178.2 L-94.4 177.7 L-107.9 176.7 L-121.5 175.4 L-135.1 173.7 L-148.8 171.6 L-162.4 169.2 L-175.9 166.3 L-189.4 163.1 L-202.7 159.5 L-216.0 155.4 L-229.0 151.0 L-241.9 146.2 L-254.5 141.0 L-266.9 135.4 L-279.0 129.4 L-290.7 123.1 L-302.2 116.3 L-313.2 109.2 L-323.9 101.8 L-334.1 93.9 L-343.8 85.8 L-353.1 77.3 L-361.8 68.4 L-370.0 59.3 L-377.5 49.8 L-384.5 40.1 L-390.9 30.0 L-396.6 19.7 L-401.6 9.2 L-405.9 -1.6 L-409.5 -12.5" stroke="#04131f" stroke-width="12" opacity="0.56"/><path d="M10.5 138.3 L0.7 139.9 L-9.2 141.1 L-19.4 142.2 L-29.7 142.9 L-40.2 143.4 L-50.8 143.7 L-61.5 143.6 L-72.3 143.2 L-83.2 142.6 L-94.1 141.6 L-105.1 140.4 L-116.0 138.8 L-127.0 137.0 L-137.9 134.8 L-148.8 132.3 L-159.6 129.5 L-170.3 126.3 L-180.8 122.9 L-191.2 119.1 L-201.5 115.0 L-211.5 110.6 L-221.3 105.9 L-230.9 100.9 L-240.2 95.6 L-249.2 90.0 L-257.9 84.0 L-266.2 77.8 L-274.2 71.4 L-281.8 64.6 L-289.0 57.6 L-295.7 50.3 L-302.0 42.7 L-307.8 35.0 L-313.1 27.0 L-317.8 18.8 L-322.1 10.4 L-325.7 1.7 L-328.8 -7.0 L-331.3 -16.0 L-333.2 -25.1 L-334.4 -34.3 L-335.0 -43.7 L-335.0 -53.1 L-334.2 -62.6 L-332.8 -72.2 L-330.7 -81.9 L-327.8 -91.6 L-324.3 -101.3 L-320.0 -110.9 L-315.0 -120.6 L-309.2 -130.2 L-302.8 -139.8 L-295.6 -149.2 L-287.6 -158.5 L-278.9 -167.8 L-269.5 -176.8 L-259.3 -185.7 L-248.4 -194.4 L-236.8 -202.9 L-224.5 -211.1" stroke="#04131f" stroke-width="17" opacity="0.51"/><path d="M-193.5 70.7 L-200.3 66.1 L-206.8 61.3 L-213.1 56.3 L-219.0 51.0 L-224.6 45.6 L-229.9 39.9 L-234.9 34.1 L-239.4 28.0 L-243.6 21.8 L-247.4 15.4 L-250.7 8.9 L-253.7 2.2 L-256.1 -4.6 L-258.1 -11.6 L-259.6 -18.7 L-260.7 -25.9 L-261.2 -33.1 L-261.2 -40.5 L-260.7 -47.9 L-259.6 -55.4 L-258.1 -62.9 L-255.9 -70.5 L-253.2 -78.0 L-250.0 -85.6 L-246.1 -93.1 L-241.7 -100.6 L-236.7 -108.1 L-231.2 -115.4 L-225.0 -122.7 L-218.3 -129.9 L-211.0 -137.0 L-203.2 -144.0 L-194.8 -150.8 L-185.8 -157.4 L-176.2 -163.8 L-166.2 -170.1 L-155.5 -176.1 L-144.4 -181.9 L-132.7 -187.5 L-120.5 -192.8 L-107.9 -197.8 L-94.8 -202.5 L-81.2 -206.9 L-67.1 -211.0 L-52.7 -214.7 L-37.9 -218.1 L-22.6 -221.1 L-7.1 -223.7 L8.8 -226.0 L25.0 -227.8 L41.5 -229.2 L58.2 -230.1 L75.2 -230.7 L92.3 -230.7 L109.6 -230.3 L127.0 -229.5 L144.6 -228.1 L162.2 -226.3 L179.8 -224.0 L197.4 -221.1" stroke="#04131f" stroke-width="14" opacity="0.56"/><path d="M-195.7 -68.4 L-192.6 -74.3 L-189.0 -80.2 L-185.0 -86.0 L-180.6 -91.8 L-175.6 -97.5 L-170.3 -103.1 L-164.5 -108.7 L-158.2 -114.1 L-151.5 -119.4 L-144.4 -124.6 L-136.8 -129.6 L-128.8 -134.5 L-120.4 -139.2 L-111.5 -143.7 L-102.3 -148.0 L-92.7 -152.2 L-82.7 -156.0 L-72.3 -159.7 L-61.5 -163.1 L-50.5 -166.2 L-39.1 -169.1 L-27.4 -171.7 L-15.3 -174.0 L-3.1 -176.0 L9.5 -177.7 L22.2 -179.1 L35.2 -180.1 L48.4 -180.8 L61.7 -181.1 L75.2 -181.1 L88.8 -180.7 L102.5 -180.0 L116.3 -178.8 L130.1 -177.3 L143.9 -175.4 L157.7 -173.1 L171.5 -170.4 L185.2 -167.3 L198.9 -163.9 L212.4 -160.0 L225.7 -155.7 L238.9 -151.0 L251.8 -145.9 L264.5 -140.5 L276.9 -134.6 L289.1 -128.3 L300.9 -121.7 L312.3 -114.7 L323.3 -107.3 L333.9 -99.5 L344.0 -91.4 L353.7 -82.9 L362.8 -74.1 L371.4 -65.0 L379.4 -55.6 L386.8 -45.8 L393.6 -35.8 L399.7 -25.5 L405.2 -14.9 L409.9 -4.1" stroke="#04131f" stroke-width="20" opacity="0.60"/><path d="M30.7 -137.2 L40.7 -137.6 L50.9 -137.7 L61.2 -137.6 L71.6 -137.2 L82.0 -136.5 L92.5 -135.6 L103.0 -134.3 L113.6 -132.7 L124.1 -130.9 L134.5 -128.7 L144.9 -126.2 L155.3 -123.5 L165.5 -120.4 L175.6 -117.0 L185.5 -113.3 L195.3 -109.4 L204.9 -105.1 L214.2 -100.5 L223.3 -95.6 L232.2 -90.5 L240.8 -85.0 L249.0 -79.3 L256.9 -73.3 L264.5 -67.0 L271.7 -60.5 L278.5 -53.7 L284.8 -46.6 L290.8 -39.4 L296.2 -31.9 L301.2 -24.1 L305.6 -16.2 L309.6 -8.1 L313.0 0.2 L315.8 8.6 L318.1 17.2 L319.7 26.0 L320.8 34.9 L321.2 43.9 L321.0 52.9 L320.2 62.1 L318.6 71.3 L316.4 80.6 L313.6 89.8 L310.0 99.1 L305.8 108.4 L300.8 117.7 L295.2 126.9 L288.8 136.0 L281.7 145.0 L273.9 154.0 L265.4 162.8 L256.2 171.4 L246.3 179.9 L235.8 188.2 L224.5 196.3 L212.5 204.1 L199.9 211.7 L186.6 219.0 L172.7 226.1 L158.1 232.8" stroke="#04131f" stroke-width="13" opacity="0.68"/><path d="M190.1 -74.1 L197.1 -69.6 L203.9 -64.9 L210.4 -60.0 L216.6 -54.8 L222.4 -49.5 L228.0 -43.9 L233.2 -38.2 L238.1 -32.2 L242.5 -26.1 L246.6 -19.8 L250.2 -13.3 L253.5 -6.6 L256.2 0.1 L258.6 7.1 L260.4 14.1 L261.8 21.3 L262.6 28.6 L263.0 35.9 L262.8 43.3 L262.1 50.8 L260.9 58.4 L259.1 66.0 L256.7 73.6 L253.8 81.2 L250.3 88.8 L246.3 96.3 L241.6 103.9 L236.4 111.3 L230.6 118.7 L224.3 126.0 L217.3 133.3 L209.8 140.3 L201.7 147.3 L193.0 154.1 L183.8 160.7 L174.0 167.1 L163.6 173.3 L152.8 179.3 L141.4 185.1 L129.4 190.6 L117.0 195.8 L104.1 200.8 L90.7 205.4 L76.9 209.7 L62.6 213.7 L48.0 217.3 L32.9 220.6 L17.4 223.5 L1.7 226.0 L-14.5 228.1 L-30.9 229.8 L-47.5 231.1 L-64.5 231.9 L-81.6 232.2 L-98.9 232.2 L-116.4 231.6 L-133.9 230.6 L-151.6 229.0 L-169.3 227.0 L-187.1 224.5" stroke="#04131f" stroke-width="14" opacity="0.65"/>
      </g>
    </g>
    <g transform="translate(296 292) rotate(25)">
      <ellipse rx="222" ry="135" fill="#101a2a" opacity=".55" filter="url(#gb6)"/>
      <g filter="url(#gb1)"><circle cx="172.9" cy="-63.6" r="2.0" fill="#f3e6f0" opacity="0.57"/><circle cx="60.0" cy="-123.2" r="2.0" fill="#e8cfe6" opacity="0.89"/><circle cx="215.3" cy="-1.2" r="1.5" fill="#f3e6f0" opacity="0.85"/><circle cx="-102.7" cy="-109.0" r="1.7" fill="#c7b2e0" opacity="0.70"/><circle cx="-133.3" cy="104.1" r="2.4" fill="#d9b9dc" opacity="0.68"/><circle cx="-151.5" cy="-81.5" r="2.2" fill="#c7b2e0" opacity="0.78"/><circle cx="47.0" cy="122.0" r="2.0" fill="#e8cfe6" opacity="0.78"/><circle cx="152.0" cy="98.6" r="2.3" fill="#d9b9dc" opacity="0.58"/><circle cx="-201.2" cy="21.5" r="2.6" fill="#f3e6f0" opacity="0.80"/><circle cx="-188.9" cy="64.1" r="3.3" fill="#d9b9dc" opacity="0.73"/><circle cx="-121.9" cy="103.4" r="3.0" fill="#d9b9dc" opacity="0.51"/><circle cx="-55.8" cy="-129.9" r="3.1" fill="#e8cfe6" opacity="0.86"/><circle cx="-216.9" cy="-28.8" r="2.3" fill="#e8cfe6" opacity="0.78"/><circle cx="78.5" cy="115.8" r="3.1" fill="#c7b2e0" opacity="0.75"/><circle cx="153.0" cy="90.9" r="2.9" fill="#c7b2e0" opacity="0.73"/><circle cx="190.5" cy="55.0" r="1.7" fill="#f3e6f0" opacity="0.56"/><circle cx="177.4" cy="67.6" r="2.9" fill="#c7b2e0" opacity="0.65"/><circle cx="211.1" cy="23.8" r="2.4" fill="#d9b9dc" opacity="0.52"/><circle cx="-177.7" cy="-71.2" r="3.3" fill="#e8cfe6" opacity="0.88"/><circle cx="211.5" cy="6.1" r="2.1" fill="#d9b9dc" opacity="0.78"/><circle cx="-61.5" cy="123.2" r="1.8" fill="#f3e6f0" opacity="0.56"/><circle cx="-212.4" cy="28.6" r="3.2" fill="#d9b9dc" opacity="0.68"/><circle cx="45.1" cy="-118.7" r="3.0" fill="#c7b2e0" opacity="0.72"/><circle cx="15.1" cy="-126.4" r="2.8" fill="#e8cfe6" opacity="0.89"/><circle cx="-207.1" cy="-43.5" r="2.2" fill="#e8cfe6" opacity="0.63"/><circle cx="-211.8" cy="0.1" r="2.1" fill="#d9b9dc" opacity="0.69"/><circle cx="64.8" cy="-116.7" r="2.5" fill="#c7b2e0" opacity="0.82"/><circle cx="-50.1" cy="131.2" r="2.7" fill="#c7b2e0" opacity="0.83"/><circle cx="53.4" cy="-125.9" r="1.8" fill="#f3e6f0" opacity="0.76"/><circle cx="119.8" cy="-108.4" r="3.1" fill="#c7b2e0" opacity="0.67"/><circle cx="-114.9" cy="-105.7" r="3.0" fill="#c7b2e0" opacity="0.65"/><circle cx="-179.8" cy="78.3" r="1.8" fill="#d9b9dc" opacity="0.83"/><circle cx="161.7" cy="79.4" r="3.3" fill="#f3e6f0" opacity="0.89"/><circle cx="190.9" cy="-67.3" r="3.2" fill="#f3e6f0" opacity="0.83"/><circle cx="54.2" cy="129.8" r="1.5" fill="#f3e6f0" opacity="0.52"/><circle cx="76.8" cy="-115.1" r="1.9" fill="#f3e6f0" opacity="0.87"/><circle cx="220.4" cy="-15.3" r="2.6" fill="#e8cfe6" opacity="0.74"/><circle cx="175.8" cy="78.5" r="2.6" fill="#c7b2e0" opacity="0.54"/><circle cx="205.9" cy="4.8" r="2.3" fill="#c7b2e0" opacity="0.75"/><circle cx="-213.8" cy="26.6" r="2.3" fill="#c7b2e0" opacity="0.86"/><circle cx="220.1" cy="23.5" r="1.5" fill="#d9b9dc" opacity="0.70"/><circle cx="135.3" cy="-103.3" r="3.4" fill="#c7b2e0" opacity="0.72"/><circle cx="206.3" cy="-29.4" r="1.6" fill="#d9b9dc" opacity="0.64"/><circle cx="24.5" cy="126.3" r="3.1" fill="#e8cfe6" opacity="0.87"/><circle cx="215.6" cy="25.3" r="2.6" fill="#e8cfe6" opacity="0.74"/><circle cx="-190.1" cy="-69.0" r="2.8" fill="#c7b2e0" opacity="0.80"/></g>
      <ellipse rx="203" ry="121" fill="url(#gwarm)"/>
      <g fill="none" filter="url(#gb3)" stroke-linecap="round">
        <path d="M96.3 -0.6 L97.7 4.4 L98.4 9.4 L98.3 14.6 L97.5 19.9 L96.0 25.2 L93.6 30.4 L90.5 35.7 L86.5 40.8 L81.8 45.8 L76.2 50.6 L69.9 55.2 L62.9 59.6 L55.1 63.6 L46.6 67.3 L37.5 70.6 L27.8 73.5 L17.6 75.9 L6.8 77.8 L-4.4 79.2 L-15.9 80.1 L-27.7 80.3 L-39.7 80.0 L-51.8 79.0 L-64.0 77.4 L-76.0 75.2 L-87.9 72.3 L-99.6 68.7 L-110.9 64.5 L-121.7 59.7 L-132.0 54.2 L-141.6 48.2 L-150.5 41.5 L-158.5 34.4 L-165.6 26.7 L-171.7 18.5 L-176.7 9.9 L-180.5 1.0 L-183.1 -8.3 L-184.4 -17.8 L-184.3 -27.6" stroke="#9c6a50" stroke-width="2.1" opacity="0.34"/><path d="M73.8 36.4 L69.7 40.5 L65.0 44.5 L59.6 48.2 L53.7 51.8 L47.2 55.1 L40.2 58.2 L32.6 60.9 L24.6 63.3 L16.1 65.4 L7.2 67.0 L-2.0 68.3 L-11.5 69.1 L-21.2 69.4 L-31.1 69.3 L-41.2 68.6 L-51.2 67.5 L-61.3 65.8 L-71.2 63.7 L-81.0 61.0 L-90.5 57.8 L-99.7 54.1 L-108.5 49.9 L-116.9 45.2 L-124.7 40.0 L-131.9 34.4 L-138.4 28.3 L-144.1 21.8 L-149.0 15.0 L-153.1 7.9 L-156.1 0.4 L-158.2 -7.3 L-159.3 -15.2 L-159.3 -23.3 L-158.1 -31.4 L-155.8 -39.6 L-152.4 -47.8 L-147.7 -56.0 L-141.9 -64.0 L-134.8 -71.8 L-126.6 -79.4" stroke="#8a5a45" stroke-width="3.4" opacity="0.39"/><path d="M8.3 44.9 L-0.0 46.2 L-8.7 46.9 L-17.7 47.1 L-26.9 46.7 L-36.2 45.6 L-45.4 43.9 L-54.4 41.6 L-63.1 38.6 L-71.4 35.0 L-79.2 30.8 L-86.3 26.0 L-92.5 20.6 L-97.9 14.7 L-102.3 8.4 L-105.5 1.7 L-107.5 -5.4 L-108.2 -12.7 L-107.6 -20.1 L-105.5 -27.7 L-102.0 -35.2 L-97.0 -42.6 L-90.5 -49.8 L-82.5 -56.7 L-73.2 -63.1 L-62.4 -69.0 L-50.4 -74.3 L-37.2 -78.9 L-22.9 -82.7 L-7.6 -85.6 L8.4 -87.4 L25.0 -88.3 L42.1 -88.0 L59.4 -86.6 L76.7 -84.0 L93.8 -80.2 L110.5 -75.2 L126.4 -69.0 L141.5 -61.7 L155.4 -53.2 L168.0 -43.6" stroke="#8a5a45" stroke-width="2.1" opacity="0.56"/><path d="M-41.0 39.5 L-49.0 37.5 L-56.7 34.8 L-64.1 31.6 L-71.0 27.9 L-77.3 23.7 L-82.9 19.0 L-87.7 13.9 L-91.7 8.3 L-94.7 2.4 L-96.6 -3.8 L-97.5 -10.2 L-97.1 -16.8 L-95.6 -23.5 L-92.7 -30.1 L-88.6 -36.7 L-83.2 -43.1 L-76.6 -49.3 L-68.7 -55.1 L-59.6 -60.5 L-49.3 -65.4 L-38.0 -69.7 L-25.7 -73.3 L-12.5 -76.1 L1.4 -78.2 L15.9 -79.3 L30.8 -79.5 L46.0 -78.8 L61.4 -77.0 L76.6 -74.2 L91.6 -70.3 L106.0 -65.4 L119.8 -59.5 L132.8 -52.5 L144.6 -44.6 L155.2 -35.8 L164.3 -26.2 L171.7 -15.8 L177.4 -4.7 L181.1 6.9 L182.7 18.9" stroke="#8a5a45" stroke-width="3.3" opacity="0.50"/><path d="M-62.1 22.3 L-67.9 17.9 L-73.0 13.0 L-77.0 7.7 L-80.0 1.9 L-81.8 -4.2 L-82.3 -10.5 L-81.5 -17.0 L-79.3 -23.5 L-75.6 -29.9 L-70.5 -36.2 L-63.9 -42.3 L-55.9 -47.9 L-46.6 -53.0 L-36.0 -57.5 L-24.3 -61.2 L-11.5 -64.1 L2.1 -66.1 L16.3 -67.1 L31.0 -67.0 L46.0 -65.8 L60.9 -63.4 L75.6 -59.9 L89.8 -55.1 L103.2 -49.2 L115.6 -42.2 L126.7 -34.1 L136.2 -25.0 L144.0 -15.0 L149.7 -4.3 L153.2 7.1 L154.3 18.9 L152.9 31.0 L148.9 43.3 L142.2 55.4 L132.7 67.2 L120.6 78.5 L105.8 89.1 L88.5 98.7 L68.8 107.2 L46.9 114.3" stroke="#6a4a48" stroke-width="2.7" opacity="0.36"/><path d="M-64.4 -22.4 L-61.1 -27.1 L-56.9 -31.7 L-51.7 -36.1 L-45.6 -40.2 L-38.7 -44.0 L-30.8 -47.4 L-22.3 -50.2 L-13.0 -52.6 L-3.1 -54.3 L7.3 -55.4 L18.0 -55.8 L29.0 -55.5 L40.2 -54.4 L51.3 -52.5 L62.2 -49.9 L72.8 -46.5 L82.9 -42.3 L92.3 -37.3 L101.0 -31.6 L108.7 -25.2 L115.3 -18.2 L120.7 -10.7 L124.7 -2.6 L127.2 5.9 L128.2 14.6 L127.5 23.6 L125.0 32.7 L120.7 41.8 L114.7 50.7 L106.8 59.3 L97.2 67.6 L85.8 75.3 L72.7 82.4 L58.1 88.7 L42.0 94.1 L24.6 98.5 L6.1 101.7 L-13.3 103.8 L-33.4 104.6 L-54.1 104.0" stroke="#7a4c3a" stroke-width="2.0" opacity="0.42"/><path d="M-34.5 -59.4 L-27.7 -61.6 L-20.5 -63.5 L-13.1 -65.1 L-5.3 -66.5 L2.7 -67.5 L10.9 -68.1 L19.3 -68.5 L27.9 -68.5 L36.5 -68.1 L45.2 -67.3 L53.9 -66.1 L62.6 -64.6 L71.2 -62.6 L79.6 -60.3 L87.9 -57.6 L95.9 -54.5 L103.7 -51.0 L111.1 -47.1 L118.1 -42.9 L124.7 -38.3 L130.8 -33.4 L136.4 -28.1 L141.4 -22.6 L145.8 -16.7 L149.6 -10.6 L152.7 -4.3 L155.0 2.2 L156.5 8.9 L157.3 15.8 L157.2 22.8 L156.3 29.8 L154.6 36.9 L151.9 44.0 L148.3 51.1 L143.9 58.1 L138.5 65.0 L132.3 71.7 L125.1 78.3 L117.1 84.6 L108.2 90.7" stroke="#6a4a48" stroke-width="2.7" opacity="0.36"/><path d="M21.3 -51.4 L29.8 -50.9 L38.4 -50.0 L47.0 -48.5 L55.4 -46.5 L63.7 -44.0 L71.7 -41.0 L79.3 -37.5 L86.5 -33.6 L93.1 -29.1 L99.1 -24.2 L104.4 -18.9 L109.0 -13.3 L112.7 -7.2 L115.5 -0.9 L117.3 5.6 L118.1 12.4 L117.8 19.3 L116.4 26.3 L113.9 33.3 L110.2 40.3 L105.3 47.2 L99.3 53.8 L92.1 60.3 L83.8 66.4 L74.3 72.1 L63.8 77.4 L52.3 82.2 L39.9 86.4 L26.6 89.9 L12.6 92.7 L-2.1 94.8 L-17.3 96.0 L-33.0 96.4 L-48.9 95.9 L-65.0 94.5 L-81.1 92.2 L-97.1 88.9 L-112.7 84.7 L-127.9 79.5 L-142.5 73.3" stroke="#8a5a45" stroke-width="2.8" opacity="0.49"/><path d="M95.1 -31.8 L100.0 -28.2 L104.4 -24.3 L108.5 -20.2 L112.1 -15.9 L115.3 -11.4 L118.0 -6.7 L120.1 -1.8 L121.7 3.2 L122.8 8.3 L123.2 13.5 L123.0 18.8 L122.2 24.2 L120.8 29.6 L118.7 35.0 L115.9 40.4 L112.5 45.7 L108.4 50.9 L103.7 56.1 L98.2 61.1 L92.2 65.9 L85.5 70.5 L78.2 74.9 L70.2 79.0 L61.7 82.9 L52.7 86.4 L43.1 89.6 L33.0 92.5 L22.5 94.9 L11.6 96.9 L0.3 98.5 L-11.3 99.7 L-23.2 100.4 L-35.3 100.5 L-47.6 100.2 L-59.9 99.4 L-72.3 98.0 L-84.7 96.1 L-97.0 93.7 L-109.2 90.7 L-121.1 87.2" stroke="#6a4a48" stroke-width="2.4" opacity="0.43"/><path d="M55.3 13.9 L52.9 18.9 L49.3 23.8 L44.4 28.5 L38.3 32.9 L31.1 36.8 L22.8 40.1 L13.5 42.8 L3.4 44.8 L-7.4 45.9 L-18.6 46.1 L-30.1 45.3 L-41.7 43.6 L-53.0 40.8 L-63.8 37.0 L-73.9 32.2 L-83.1 26.4 L-91.0 19.7 L-97.4 12.3 L-102.2 4.1 L-105.1 -4.6 L-105.9 -13.7 L-104.5 -23.1 L-100.8 -32.5 L-94.8 -41.8 L-86.5 -50.7 L-75.8 -59.1 L-62.9 -66.7 L-47.9 -73.3 L-31.0 -78.8 L-12.5 -82.9 L7.3 -85.5 L28.1 -86.4 L49.6 -85.6 L71.2 -82.9 L92.6 -78.3 L113.2 -71.8 L132.7 -63.4 L150.5 -53.1 L166.1 -41.1 L179.1 -27.6" stroke="#fff1e0" stroke-width="4" opacity=".22"/><path d="M7.4 35.5 L-1.1 36.8 L-10.0 37.4 L-19.2 37.2 L-28.6 36.2 L-37.9 34.4 L-46.9 31.8 L-55.5 28.4 L-63.3 24.1 L-70.3 19.1 L-76.3 13.4 L-80.9 7.1 L-84.1 0.3 L-85.7 -7.0 L-85.6 -14.5 L-83.7 -22.1 L-79.9 -29.7 L-74.2 -37.1 L-66.5 -44.2 L-57.1 -50.7 L-45.8 -56.5 L-33.0 -61.5 L-18.7 -65.5 L-3.2 -68.3 L13.3 -69.8 L30.4 -70.0 L47.9 -68.6 L65.4 -65.8 L82.6 -61.4 L98.9 -55.4 L114.2 -47.9 L127.8 -39.0 L139.6 -28.7 L149.1 -17.2 L156.1 -4.7 L160.1 8.6 L160.9 22.6 L158.4 36.8 L152.4 51.1 L142.8 65.2 L129.7 78.6" stroke="#fff1e0" stroke-width="4" opacity=".22"/><path d="M-47.9 21.6 L-54.0 17.8 L-59.3 13.5 L-63.6 8.7 L-66.9 3.4 L-69.0 -2.3 L-69.7 -8.3 L-68.9 -14.4 L-66.7 -20.6 L-62.9 -26.8 L-57.6 -32.7 L-50.8 -38.2 L-42.4 -43.3 L-32.7 -47.7 L-21.8 -51.4 L-9.7 -54.2 L3.2 -56.1 L16.8 -56.8 L30.9 -56.4 L45.1 -54.8 L59.2 -51.9 L72.9 -47.8 L85.8 -42.4 L97.6 -35.8 L108.1 -28.1 L116.9 -19.3 L123.7 -9.6 L128.3 0.9 L130.4 11.9 L129.9 23.4 L126.7 35.0 L120.5 46.5 L111.5 57.7 L99.6 68.4 L84.8 78.2 L67.5 86.9 L47.7 94.3 L25.7 100.2 L1.9 104.2 L-23.3 106.3 L-49.4 106.3" stroke="#fff1e0" stroke-width="4" opacity=".22"/><path d="M-55.3 -13.9 L-52.9 -18.9 L-49.3 -23.8 L-44.4 -28.5 L-38.3 -32.9 L-31.1 -36.8 L-22.8 -40.1 L-13.5 -42.8 L-3.4 -44.8 L7.4 -45.9 L18.6 -46.1 L30.1 -45.3 L41.7 -43.6 L53.0 -40.8 L63.8 -37.0 L73.9 -32.2 L83.1 -26.4 L91.0 -19.7 L97.4 -12.3 L102.2 -4.1 L105.1 4.6 L105.9 13.7 L104.5 23.1 L100.8 32.5 L94.8 41.8 L86.5 50.7 L75.8 59.1 L62.9 66.7 L47.9 73.3 L31.0 78.8 L12.5 82.9 L-7.3 85.5 L-28.1 86.4 L-49.6 85.6 L-71.2 82.9 L-92.6 78.3 L-113.2 71.8 L-132.7 63.4 L-150.5 53.1 L-166.1 41.1 L-179.1 27.6" stroke="#fff1e0" stroke-width="4" opacity=".22"/><path d="M-7.4 -35.5 L1.1 -36.8 L10.0 -37.4 L19.2 -37.2 L28.6 -36.2 L37.9 -34.4 L46.9 -31.8 L55.5 -28.4 L63.3 -24.1 L70.3 -19.1 L76.3 -13.4 L80.9 -7.1 L84.1 -0.3 L85.7 7.0 L85.6 14.5 L83.7 22.1 L79.9 29.7 L74.2 37.1 L66.5 44.2 L57.1 50.7 L45.8 56.5 L33.0 61.5 L18.7 65.5 L3.2 68.3 L-13.3 69.8 L-30.4 70.0 L-47.9 68.6 L-65.4 65.8 L-82.6 61.4 L-98.9 55.4 L-114.2 47.9 L-127.8 39.0 L-139.6 28.7 L-149.1 17.2 L-156.1 4.7 L-160.1 -8.6 L-160.9 -22.6 L-158.4 -36.8 L-152.4 -51.1 L-142.8 -65.2 L-129.7 -78.6" stroke="#fff1e0" stroke-width="4" opacity=".22"/><path d="M47.9 -21.6 L54.0 -17.8 L59.3 -13.5 L63.6 -8.7 L66.9 -3.4 L69.0 2.3 L69.7 8.3 L68.9 14.4 L66.7 20.6 L62.9 26.8 L57.6 32.7 L50.8 38.2 L42.4 43.3 L32.7 47.7 L21.8 51.4 L9.7 54.2 L-3.2 56.1 L-16.8 56.8 L-30.9 56.4 L-45.1 54.8 L-59.2 51.9 L-72.9 47.8 L-85.8 42.4 L-97.6 35.8 L-108.1 28.1 L-116.9 19.3 L-123.7 9.6 L-128.3 -0.9 L-130.4 -11.9 L-129.9 -23.4 L-126.7 -35.0 L-120.5 -46.5 L-111.5 -57.7 L-99.6 -68.4 L-84.8 -78.2 L-67.5 -86.9 L-47.7 -94.3 L-25.7 -100.2 L-1.9 -104.2 L23.3 -106.3 L49.4 -106.3" stroke="#fff1e0" stroke-width="4" opacity=".22"/>
      </g>
    </g>
    <g transform="translate(302 256) rotate(25)"><ellipse rx="128" ry="82" fill="url(#gcore)"/></g>
    <rect width="578" height="649" filter="url(#gstars)" opacity=".6"/>
    <rect width="578" height="649" filter="url(#gstars2)" opacity=".9"/>
  </g>
</svg><!--GALAXY-END-->
</div>
<div class="abs" style="left:0;top:206.8px;width:1600px;height:8px;background:linear-gradient(rgba(0,0,0,.15),rgba(0,0,0,.06) 35%,rgba(0,0,0,.015) 70%,rgba(0,0,0,0));z-index:4"></div>
<div id="notes" class="abs"></div>
<span class="f" style="top:880.00px;left:263px;--s:16px;--b:895px;letter-spacing:0.137px;color:#5e5e5e">Tap to add notes</span>

<!-- ================= STATUS ================= -->
<div id="status" class="abs"></div>
<div id="statustext">
  <span class="f" style="top:923.00px;left:19px;letter-spacing:-0.325px;">Slide 1 of 10</span>
  <span class="f" style="top:923.00px;left:162px;letter-spacing:0.017px;-webkit-text-stroke:.55px #262626;color:#262626">Accessibility: Investigate</span>
  <span class="f" style="top:923.00px;left:1129px;letter-spacing:-0.272px;">Notes</span>
  <span class="f" style="top:923.00px;left:1531px;letter-spacing:-0.844px;">83%</span>
</div>
<!--STAT-START--><svg id="sticons" style="left:0;top:0;z-index:5" width="1600" height="949" viewBox="0 0 1600 949" fill="none" stroke-linecap="round" stroke-linejoin="round">
  <!-- right scrollbar -->
  <path d="M1581.500 214a7 7 0 0 1 7-7H1600V814.500h-11.500a7 7 0 0 1-7-7z" fill="#f3f3f3"/>
  <path d="M1586 219.300l4.900-6.600 4.900 6.600z" fill="#6e6e6e"/>
  <rect x="1586.500" y="277.400" width="8.800" height="49.400" rx="4.400" fill="#707070"/>
  <path d="M1586 802.300l4.900 7 4.900-7z" fill="#6e6e6e"/>
  <path d="M1585.300 824l5.500-6.700 5.500 6.700zM1585.300 830.800l5.500-6.700 5.500 6.700z" fill="#6e6e6e"/>
  <path d="M1585.300 836.100l5.500 6.700 5.500-6.700zM1585.300 842.600l5.500 6.700 5.500-6.700z" fill="#6e6e6e"/>
  <!-- accessibility -->
  <g stroke="#333" stroke-width="1.100">
    <circle cx="149.700" cy="923.600" r="2.100"/>
    <path d="M143.200 925.300c2 1 4 1.500 6.500 1.500s4.500-.5 6.500-1.500M146.600 927.400v3.200l-2.600 5.300M152.800 927.400v2.400M149.700 931l-1.200 2"/>
    <path d="M151.700 930.700l5.400 5.400M157.100 930.700l-5.400 5.400"/>
  </g>
  <!-- notes -->
  <path d="M1109.500 929h16.800M1109.500 933h16.800M1109.500 936.900h16.800M1114.700 924.500l3.300-3.200 3.300 3.200" stroke="#444" stroke-width="1.100"/>
  <!-- view buttons -->
  <rect x="1185" y="911.500" width="45" height="33.500" fill="#dedede"/>
  <g stroke="#333" stroke-width="1.200">
    <rect x="1200.600" y="923.300" width="14.200" height="11.900"/><path d="M1203.800 923.500v8.700h11"/><rect x="1206.500" y="925.800" width="5.500" height="3.400" stroke-width="1"/>
    <rect x="1246.300" y="923.700" width="5.200" height="4.200"/><rect x="1255" y="923.700" width="5.200" height="4.200"/><rect x="1246.300" y="931.200" width="5.200" height="4.200"/><rect x="1255" y="931.200" width="5.200" height="4.200"/>
    <path d="M1298.400 924.700c-2-1.600-4.500-2-6.800-1.700v10.400c2.300-.3 4.800.1 6.800 1.700 2-1.600 4.500-2 6.800-1.700v-10.400c-2.300-.3-4.800.1-6.800 1.700zM1298.400 924.700v10.400" stroke-width="1.100"/>
    <path d="M1293.500 926.300h3M1293.500 928.500h3M1293.500 930.700h3M1300.300 926.300h3M1300.300 928.500h3M1300.300 930.700h3" stroke-width=".8"/>
    <path d="M1337.300 922.800h13.200M1338.500 923v6.700h10.800v-6.700M1343.900 929.900v5.500M1340.300 935.500h7.200"/><rect x="1341.800" y="925" width="4.300" height="2.400" stroke-width=".9"/>
  </g>
  <!-- zoom -->
  <path d="M1374.400 928.300h7.800" stroke="#8a8a8a" stroke-width="1.100"/>
  <path d="M1389 928.500h107.500M1442.500 925.700v6" stroke="#777" stroke-width="1.200"/>
  <rect x="1430.800" y="923" width="5.400" height="11.700" rx=".8" fill="#666"/>
  <path d="M1502.500 928.400h8M1506.500 924.400v8" stroke="#777" stroke-width="1.100"/>
  <g stroke="#333" stroke-width="1.100"><rect x="1580.600" y="925.200" width="6.400" height="6.400"/><path d="M1581.600 922.600l2.200-2.200 2.200 2.200M1581.600 934.200l2.200 2.200 2.200-2.200M1578.200 926.200l-2.200 2.200 2.200 2.200M1589.400 926.200l2.200 2.200-2.200 2.200"/></g>
</svg>
<!--STAT-END-->
<div id="desk" class="abs"></div>

</div>
</body>
</html>
